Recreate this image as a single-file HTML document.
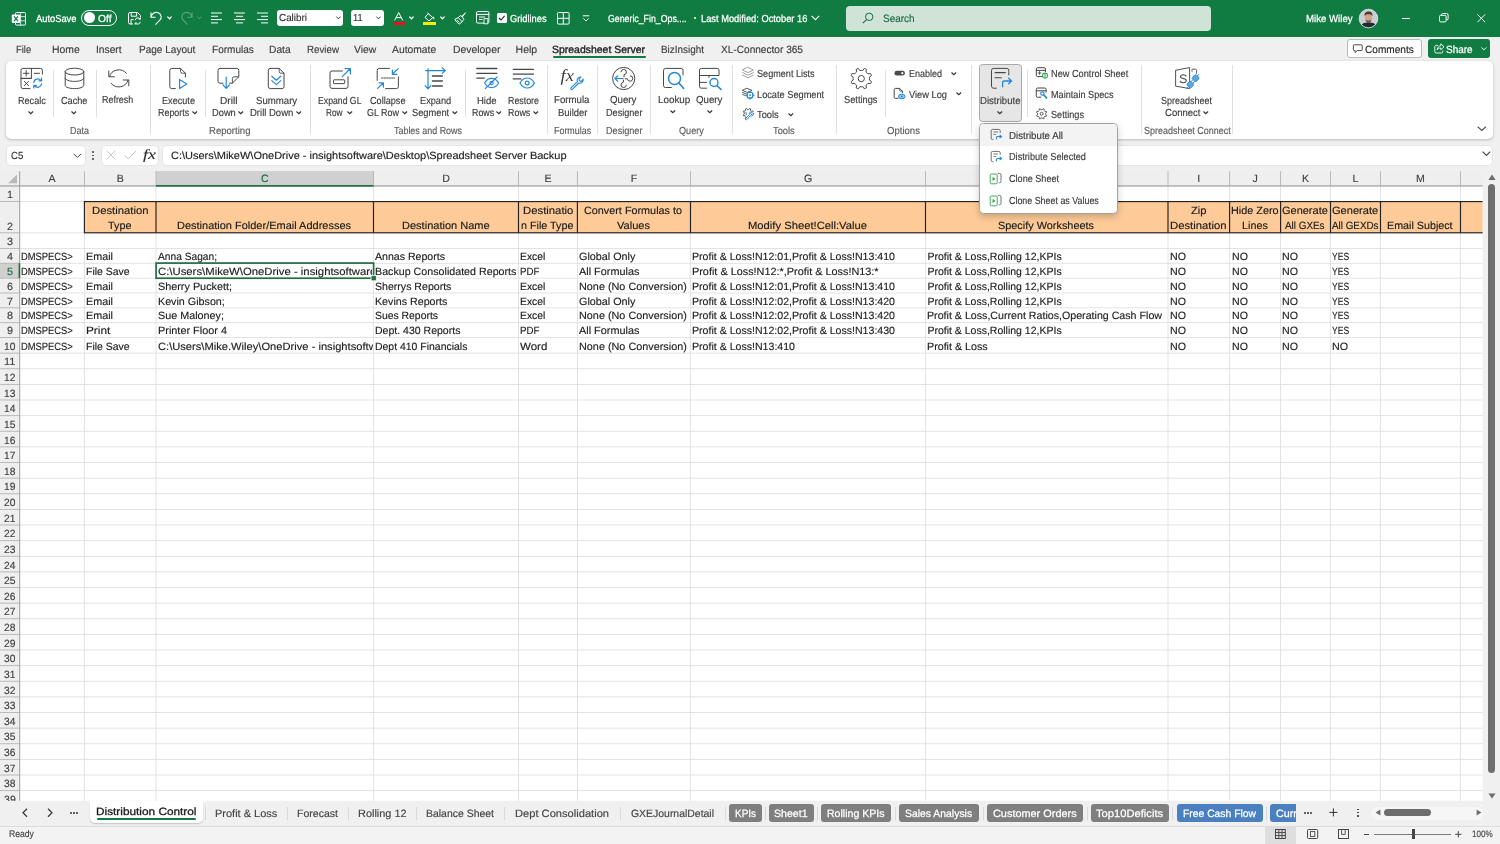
<!DOCTYPE html>
<html><head><meta charset="utf-8"><title>Excel</title>
<style>
html,body{margin:0;padding:0;}
body{width:1500px;height:844px;overflow:hidden;position:relative;background:#f0f0f0;font-family:"Liberation Sans",sans-serif;text-rendering:geometricPrecision;}
.b{position:absolute;box-sizing:border-box;display:block;}
.t{position:absolute;white-space:pre;line-height:1;transform-origin:0 0;display:block;}
svg{overflow:visible;}
</style></head><body><div id="root" style="position:absolute;left:0;top:0;width:1500px;height:844px;will-change:transform;">
<!-- p_title -->
<div class="b" style="left:0px;top:0px;width:1500px;height:36.6px;background:#107c41;"></div><svg class="b" style="left:11px;top:11px;" width="16" height="16" viewBox="0 0 16 16">
<rect x="4.5" y="1.5" width="10" height="12.6" rx="1" fill="none" stroke="#fff" stroke-width="1"/>
<path d="M4.5 5.6H14.5M4.5 9.8H14.5M9.6 1.5V14" stroke="#fff" stroke-width="0.9" fill="none" opacity=".85"/>
<rect x="0.8" y="3.6" width="8.4" height="8.4" rx="1" fill="#fff"/>
<path d="M3 5.4L7 10.2M7 5.4L3 10.2" stroke="#107c41" stroke-width="1.3"/></svg><span class="t" style="font-size:10.2px;color:#ffffff;top:15.00px;left:36.44px;transform:scaleX(0.9158);-webkit-text-stroke:.25px #ffffff;">AutoSave</span><div class="b" style="left:81px;top:9.6px;width:36.2px;height:16.6px;border:1px solid #fff;border-radius:9px;"></div><div class="b" style="left:84.2px;top:12.4px;width:11px;height:11px;background:#fff;border-radius:50%;"></div><span class="t" style="font-size:10.2px;color:#ffffff;top:15.00px;left:98.44px;transform:scaleX(1.0121);-webkit-text-stroke:.25px #ffffff;">Off</span><svg class="b" style="left:126.5px;top:11px;" width="15" height="15" viewBox="0 0 15 15"><path d="M1.5 3A1.5 1.5 0 0 1 3 1.5H10.5L13.5 4.5V6.5M1.5 3V11.5A1.5 1.5 0 0 0 3 13H6" fill="none" stroke="#fff" stroke-width="1"/>
<path d="M4.2 1.8V5.2H9.6V1.8M4 13V8.6H6.6" fill="none" stroke="#fff" stroke-width="1"/>
<path d="M8.2 9.2a2.8 2.8 0 0 1 5-1.2M13.4 6.6V8.2H11.8M13.4 10.8a2.8 2.8 0 0 1-5 1.2M8.2 13.6V12H9.8" fill="none" stroke="#fff" stroke-width="1"/></svg><svg class="b" style="left:149px;top:10px;" width="14" height="16" viewBox="0 0 14 16"><path d="M2 2.6V7.2H6.6" fill="none" stroke="#fff" stroke-width="1.1"/><path d="M2.2 7A5 4.6 0 1 1 10.6 10.4L6.4 14.6" fill="none" stroke="#fff" stroke-width="1.1"/></svg><svg class="b" style="left:166.6px;top:16px;" width="5" height="4" viewBox="0 0 5 4"><path d="M0.4 0.6L2.5 2.8L4.6 0.6" fill="none" stroke="#fff" stroke-width="1.25"/></svg><svg class="b" style="left:180px;top:10px;" width="14" height="16" viewBox="0 0 14 16"><path d="M12 2.6V7.2H7.4" fill="none" stroke="#5fa57f" stroke-width="1.1"/><path d="M11.8 7A5 4.6 0 1 0 3.4 10.4L7.6 14.6" fill="none" stroke="#5fa57f" stroke-width="1.1"/></svg><svg class="b" style="left:196.6px;top:16px;" width="5" height="4" viewBox="0 0 5 4"><path d="M0.4 0.6L2.5 2.8L4.6 0.6" fill="none" stroke="#5fa57f" stroke-width="1"/></svg><svg class="b" style="left:211px;top:12px;" width="12" height="12" viewBox="0 0 12 12"><path d="M0 1H11M0 4.3H7M0 7.6H11M0 10.9H7" stroke="#fff" stroke-width="1" fill="none"/></svg><svg class="b" style="left:233.5px;top:12px;" width="12" height="12" viewBox="0 0 12 12"><path d="M0 1H11M2 4.3H9M0 7.6H11M2 10.9H9" stroke="#fff" stroke-width="1" fill="none"/></svg><svg class="b" style="left:257px;top:12px;" width="12" height="12" viewBox="0 0 12 12"><path d="M0 1H11M4 4.3H11M0 7.6H11M4 10.9H11" stroke="#fff" stroke-width="1" fill="none"/></svg><div class="b" style="left:277px;top:9.6px;width:66.4px;height:16.6px;background:#fff;border-radius:3px;"></div><span class="t" style="font-size:10.2px;color:#333;top:14.00px;left:279.04px;transform:scaleX(0.9686);-webkit-text-stroke:.15px #333;">Calibri</span><svg class="b" style="left:335.6px;top:16px;" width="5" height="4" viewBox="0 0 5 4"><path d="M0.4 0.6L2.5 2.8L4.6 0.6" fill="none" stroke="#333" stroke-width="1"/></svg><div class="b" style="left:350.8px;top:9.6px;width:33.2px;height:16.6px;background:#fff;border-radius:3px;"></div><span class="t" style="font-size:10.2px;color:#333;top:14.00px;left:353.04px;transform:scaleX(0.9046);-webkit-text-stroke:.15px #333;">11</span><svg class="b" style="left:376px;top:16px;" width="5" height="4" viewBox="0 0 5 4"><path d="M0.4 0.6L2.5 2.8L4.6 0.6" fill="none" stroke="#333" stroke-width="1"/></svg><svg class="b" style="left:394px;top:12px;" width="10" height="9" viewBox="0 0 10 9"><path d="M.6 8.4L4.7 .6L8.8 8.4M2.2 5.6H7.2" fill="none" stroke="#fff" stroke-width="1"/></svg><div class="b" style="left:392.6px;top:21.7px;width:12.5px;height:3px;background:#e81123;"></div><svg class="b" style="left:409.4px;top:16px;" width="5" height="4" viewBox="0 0 5 4"><path d="M0.4 0.6L2.5 2.8L4.6 0.6" fill="none" stroke="#fff" stroke-width="1.25"/></svg><svg class="b" style="left:424px;top:11.6px;" width="12" height="10" viewBox="0 0 12 10"><path d="M4.2 1.6L8.8 5.6L5 9L1 5.4Z M3.4 .6L5.6 2.8" fill="none" stroke="#fff" stroke-width="1" stroke-linejoin="round"/><path d="M9.2 4.2C10.6 5.6 10.8 6.8 10 7.4C9 6.8 9 5.6 9.2 4.2Z" fill="#fff"/></svg><div class="b" style="left:423.1px;top:21.7px;width:12.5px;height:3px;background:#ffeb00;"></div><svg class="b" style="left:440px;top:16px;" width="5" height="4" viewBox="0 0 5 4"><path d="M0.4 0.6L2.5 2.8L4.6 0.6" fill="none" stroke="#fff" stroke-width="1.25"/></svg><svg class="b" style="left:454px;top:11.6px;" width="13" height="13" viewBox="0 0 13 13"><path d="M11.4 .8L8 4.6M8 4.6L6.4 3.6L4.2 5.6L8 9.6L9.8 7.6L9 6Z M4.2 5.6L.8 7.4C2.2 9.8 3.6 11 5.6 12.2L8 9.6M3 8.2L5 10.2" fill="none" stroke="#fff" stroke-width="1" stroke-linejoin="round" stroke-linecap="round"/><path d="M11.8 .6L8.6 5.2L7.6 4.2Z" fill="#fff"/></svg><svg class="b" style="left:476px;top:11px;" width="14" height="14" viewBox="0 0 14 14"><rect x=".5" y=".5" width="12.4" height="11.6" rx="1.2" fill="none" stroke="#fff"/><path d="M.5 3.4H12.9M3 6H9M3 8.4H6.5" stroke="#fff" fill="none"/><path d="M8 7.6H11.8V12.8H8Z" fill="#107c41" stroke="#fff" stroke-width=".9"/></svg><div class="b" style="left:497.2px;top:13.2px;width:9.6px;height:9.6px;background:#fff;border-radius:1.5px;"></div><svg class="b" style="left:497.2px;top:13.2px;" width="9.6" height="9.6" viewBox="0 0 9.6 9.6"><path d="M2 5L4 7L7.6 2.8" fill="none" stroke="#222" stroke-width="1.1"/></svg><span class="t" style="font-size:10.2px;color:#ffffff;top:15.00px;left:510.44px;transform:scaleX(0.9096);-webkit-text-stroke:.25px #ffffff;">Gridlines</span><svg class="b" style="left:557px;top:12px;" width="13" height="13" viewBox="0 0 13 13"><rect x=".5" y=".5" width="11.6" height="11.6" rx="1" fill="none" stroke="#fff"/><path d="M6.3 .5V12.1M.5 6.3H12.1" stroke="#fff" fill="none"/></svg><svg class="b" style="left:582.2px;top:15.4px;" width="8" height="8" viewBox="0 0 8 8"><path d="M.8 .8H7.2" stroke="#fff" fill="none"/><path d="M1.4 3.4L4 6L6.6 3.4" stroke="#fff" fill="none"/></svg><span class="t" style="font-size:10.2px;color:#ffffff;top:15.00px;left:608.44px;transform:scaleX(0.8618);-webkit-text-stroke:.25px #ffffff;">Generic_Fin_Ops....</span><div class="b" style="left:694px;top:16.9px;width:2.4px;height:2.4px;background:#fff;border-radius:50%;"></div><span class="t" style="font-size:10.2px;color:#ffffff;top:15.00px;left:701.24px;transform:scaleX(0.9118);-webkit-text-stroke:.25px #ffffff;">Last Modified: October 16</span><svg class="b" style="left:810.6px;top:15.4px;" width="9" height="6" viewBox="0 0 9 6"><path d="M.6 .8L4.4 4.6L8.2 .8" fill="none" stroke="#fff" stroke-width="1.1"/></svg><div class="b" style="left:845.6px;top:5.9px;width:365.6px;height:24.8px;background:#cfe3d7;border-radius:4px;"></div><svg class="b" style="left:861.5px;top:12px;" width="12" height="12" viewBox="0 0 12 12"><circle cx="7.2" cy="4.8" r="3.7" fill="none" stroke="#1f6b42" stroke-width="1"/><path d="M4.6 7.6L.8 11.2" stroke="#1f6b42" stroke-width="1.1"/></svg><span class="t" style="font-size:10.6px;color:#1f6b42;top:14.00px;left:883.42px;transform:scaleX(0.9413);-webkit-text-stroke:.15px #1f6b42;">Search</span><span class="t" style="font-size:10.2px;color:#ffffff;top:15.00px;left:1306.04px;transform:scaleX(0.9456);-webkit-text-stroke:.25px #ffffff;">Mike Wiley</span><svg class="b" style="left:1358.6px;top:8.6px;" width="19" height="19" viewBox="0 0 19 19"><defs><clipPath id="av"><circle cx="9.5" cy="9.5" r="9.3"/></clipPath></defs>
<circle cx="9.5" cy="9.5" r="9.3" fill="#c9cdd6"/>
<g clip-path="url(#av)"><path d="M1 19C2 14.4 5 13.4 9.5 13.4S17 14.4 18 19Z" fill="#23262e"/>
<ellipse cx="9.5" cy="8.4" rx="3.7" ry="4.6" fill="#d3a486"/>
<path d="M5.6 7C5.4 3.6 7.4 2.6 9.6 2.6S13.8 3.8 13.4 7C12.6 5.6 11 5.2 9.5 5.2S6.4 5.6 5.6 7Z" fill="#4a3a30"/>
<path d="M6.4 10.4C7 13.4 8.4 13.8 9.5 13.8S12 13.4 12.6 10.4C11.6 11.4 10.6 11.6 9.5 11.6S7.4 11.4 6.4 10.4Z" fill="#6b5547"/></g>
<circle cx="9.5" cy="9.5" r="9.3" fill="none" stroke="#e8ebf0" stroke-width=".8"/></svg><div class="b" style="left:1402px;top:17.8px;width:8.2px;height:1px;background:#fff;"></div><svg class="b" style="left:1438.6px;top:13.4px;" width="10" height="10" viewBox="0 0 10 10"><rect x=".5" y="2.3" width="6.6" height="6.6" rx="1.2" fill="none" stroke="#fff"/><path d="M2.6 2.2V1.6A1.1 1.1 0 0 1 3.7 .5H7.6A1.5 1.5 0 0 1 9.1 2V5.8A1.1 1.1 0 0 1 8 6.9H7.3" fill="none" stroke="#fff"/></svg><svg class="b" style="left:1476.8px;top:13.8px;" width="9" height="9" viewBox="0 0 9 9"><path d="M.4 .4L8.2 8.2M8.2 .4L.4 8.2" stroke="#fff" stroke-width="1" fill="none"/></svg>
<!-- p_tabs -->
<span class="t" style="font-size:10.5px;color:#3d3d3d;top:45.00px;left:16.42px;transform:scaleX(0.8981);-webkit-text-stroke:.15px #3d3d3d;">File</span><span class="t" style="font-size:10.5px;color:#3d3d3d;top:45.00px;left:52.22px;transform:scaleX(0.9922);-webkit-text-stroke:.15px #3d3d3d;">Home</span><span class="t" style="font-size:10.5px;color:#3d3d3d;top:45.00px;left:96.02px;transform:scaleX(0.9746);-webkit-text-stroke:.15px #3d3d3d;">Insert</span><span class="t" style="font-size:10.5px;color:#3d3d3d;top:45.00px;left:139.02px;transform:scaleX(0.9564);-webkit-text-stroke:.15px #3d3d3d;">Page Layout</span><span class="t" style="font-size:10.5px;color:#3d3d3d;top:45.00px;left:211.82px;transform:scaleX(0.9550);-webkit-text-stroke:.15px #3d3d3d;">Formulas</span><span class="t" style="font-size:10.5px;color:#3d3d3d;top:45.00px;left:269.42px;transform:scaleX(0.9734);-webkit-text-stroke:.15px #3d3d3d;">Data</span><span class="t" style="font-size:10.5px;color:#3d3d3d;top:45.00px;left:307.02px;transform:scaleX(0.9291);-webkit-text-stroke:.15px #3d3d3d;">Review</span><span class="t" style="font-size:10.5px;color:#3d3d3d;top:45.00px;left:353.82px;transform:scaleX(0.9831);-webkit-text-stroke:.15px #3d3d3d;">View</span><span class="t" style="font-size:10.5px;color:#3d3d3d;top:45.00px;left:392.22px;transform:scaleX(0.9832);-webkit-text-stroke:.15px #3d3d3d;">Automate</span><span class="t" style="font-size:10.5px;color:#3d3d3d;top:45.00px;left:453.02px;transform:scaleX(0.9900);-webkit-text-stroke:.15px #3d3d3d;">Developer</span><span class="t" style="font-size:10.5px;color:#3d3d3d;top:45.00px;left:515.62px;-webkit-text-stroke:.15px #3d3d3d;">Help</span><span class="t" style="font-size:10.5px;color:#3d3d3d;top:45.00px;left:661.02px;transform:scaleX(0.9444);-webkit-text-stroke:.15px #3d3d3d;">BizInsight</span><span class="t" style="font-size:10.5px;color:#3d3d3d;top:45.00px;left:720.82px;transform:scaleX(0.9620);-webkit-text-stroke:.15px #3d3d3d;">XL-Connector 365</span><span class="t" style="font-size:10.5px;color:#1f1f1f;top:45.00px;left:552.42px;transform:scaleX(0.9958);-webkit-text-stroke:.35px #1f1f1f;">Spreadsheet Server</span><div class="b" style="left:553px;top:55.9px;width:92.6px;height:1.7px;background:#107c41;border-radius:1px;"></div><div class="b" style="left:1346.5px;top:39.4px;width:75px;height:18.8px;background:#fff;border:1px solid #b9b9b9;border-radius:3px;"></div><svg class="b" style="left:1352.6px;top:44px;" width="10" height="10" viewBox="0 0 10 10"><path d="M1.2 .8H8.4A.8 .8 0 0 1 9.2 1.6V5.8A.8 .8 0 0 1 8.4 6.6H4.2L2.2 8.6V6.6H1.2A.8 .8 0 0 1 .4 5.8V1.6A.8 .8 0 0 1 1.2 .8Z" fill="none" stroke="#333" stroke-width=".9"/></svg><span class="t" style="font-size:10.5px;color:#262626;top:45.00px;left:1364.92px;transform:scaleX(0.9612);-webkit-text-stroke:.15px #262626;">Comments</span><div class="b" style="left:1427.8px;top:39.4px;width:62.6px;height:18.8px;background:#107c41;border-radius:3px;"></div><svg class="b" style="left:1433.6px;top:43.4px;" width="11" height="11" viewBox="0 0 11 11"><path d="M4 2.4H2.2A1.4 1.4 0 0 0 .8 3.8V8.6A1.4 1.4 0 0 0 2.2 10H7.4A1.4 1.4 0 0 0 8.8 8.6V7.6" fill="none" stroke="#fff" stroke-width=".9"/><path d="M6.8 .8L10 3.8L6.8 6.8V5C5 5 3.9 5.6 3.2 7C3.4 4.4 4.6 2.9 6.8 2.7Z" fill="none" stroke="#fff" stroke-width=".9" stroke-linejoin="round"/></svg><span class="t" style="font-size:10.5px;color:#fff;top:45.00px;left:1445.92px;transform:scaleX(0.9489);-webkit-text-stroke:.25px #fff;">Share</span><svg class="b" style="left:1481px;top:47.4px;" width="6" height="4" viewBox="0 0 6 4"><path d="M.4 .5L2.8 2.9L5.2 .5" fill="none" stroke="#fff" stroke-width="1"/></svg>
<!-- p_ribbon -->
<div class="b" style="left:6px;top:61px;width:1487.4px;height:77.8px;background:#fff;border-radius:5px;box-shadow:0 1px 3px rgba(0,0,0,.22),0 0 1px rgba(0,0,0,.12);"></div><div class="b" style="left:149.5px;top:64.5px;width:1px;height:69.5px;background:#e1e1e1;"></div><div class="b" style="left:309.8px;top:64.5px;width:1px;height:69.5px;background:#e1e1e1;"></div><div class="b" style="left:546.5px;top:64.5px;width:1px;height:69.5px;background:#e1e1e1;"></div><div class="b" style="left:597px;top:64.5px;width:1px;height:69.5px;background:#e1e1e1;"></div><div class="b" style="left:649.5px;top:64.5px;width:1px;height:69.5px;background:#e1e1e1;"></div><div class="b" style="left:731.5px;top:64.5px;width:1px;height:69.5px;background:#e1e1e1;"></div><div class="b" style="left:835.7px;top:64.5px;width:1px;height:69.5px;background:#e1e1e1;"></div><div class="b" style="left:971.2px;top:64.5px;width:1px;height:69.5px;background:#e1e1e1;"></div><div class="b" style="left:1141.2px;top:64.5px;width:1px;height:69.5px;background:#e1e1e1;"></div><div class="b" style="left:1232px;top:64.5px;width:1px;height:69.5px;background:#e1e1e1;"></div><div class="b" style="left:52.5px;top:69.5px;width:1px;height:47.5px;background:#e1e1e1;"></div><div class="b" style="left:95.7px;top:69.5px;width:1px;height:47.5px;background:#e1e1e1;"></div><div class="b" style="left:205px;top:69.5px;width:1px;height:47.5px;background:#e1e1e1;"></div><div class="b" style="left:465px;top:69.5px;width:1px;height:47.5px;background:#e1e1e1;"></div><div class="b" style="left:884.5px;top:69.5px;width:1px;height:47.5px;background:#e1e1e1;"></div><div class="b" style="left:1026.5px;top:69.5px;width:1px;height:47.5px;background:#e1e1e1;"></div><span class="t" style="font-size:10.2px;color:#3a3a3a;top:97.00px;left:17.64px;transform:scaleX(0.8917);-webkit-text-stroke:.15px #3a3a3a;">Recalc</span><svg class="b" style="left:28.2px;top:110.9px;" width="5.6" height="3.4" viewBox="0 0 5.6 3.4"><path d="M.5 .5L2.8 2.685L5.1 .5" fill="none" stroke="#333" stroke-width="1.2"/></svg><span class="t" style="font-size:10.2px;color:#3a3a3a;top:97.00px;left:61.14px;transform:scaleX(0.8987);-webkit-text-stroke:.15px #3a3a3a;">Cache</span><svg class="b" style="left:71.2px;top:110.9px;" width="5.6" height="3.4" viewBox="0 0 5.6 3.4"><path d="M.5 .5L2.8 2.685L5.1 .5" fill="none" stroke="#333" stroke-width="1.2"/></svg><span class="t" style="font-size:10.2px;color:#3a3a3a;top:96.00px;left:102.14px;transform:scaleX(0.8766);-webkit-text-stroke:.15px #3a3a3a;">Refresh</span><span class="t" style="font-size:10.2px;color:#5a5a5a;top:127.00px;left:69.64px;transform:scaleX(0.8810);-webkit-text-stroke:.15px #5a5a5a;">Data</span><span class="t" style="font-size:10.2px;color:#3a3a3a;top:97.00px;left:161.64px;transform:scaleX(0.8956);-webkit-text-stroke:.15px #3a3a3a;">Execute</span><span class="t" style="font-size:10.2px;color:#3a3a3a;top:109.00px;left:157.94px;transform:scaleX(0.8738);-webkit-text-stroke:.15px #3a3a3a;">Reports</span><svg class="b" style="left:192px;top:111.2px;" width="5.6" height="3.4" viewBox="0 0 5.6 3.4"><path d="M.5 .5L2.8 2.685L5.1 .5" fill="none" stroke="#333" stroke-width="1.2"/></svg><span class="t" style="font-size:10.2px;color:#3a3a3a;top:97.00px;left:219.94px;transform:scaleX(0.9956);-webkit-text-stroke:.15px #3a3a3a;">Drill</span><span class="t" style="font-size:10.2px;color:#3a3a3a;top:109.00px;left:211.64px;transform:scaleX(0.9125);-webkit-text-stroke:.15px #3a3a3a;">Down</span><svg class="b" style="left:238.2px;top:111.2px;" width="5.6" height="3.4" viewBox="0 0 5.6 3.4"><path d="M.5 .5L2.8 2.685L5.1 .5" fill="none" stroke="#333" stroke-width="1.2"/></svg><span class="t" style="font-size:10.2px;color:#3a3a3a;top:97.00px;left:255.94px;transform:scaleX(0.9444);-webkit-text-stroke:.15px #3a3a3a;">Summary</span><span class="t" style="font-size:10.2px;color:#3a3a3a;top:109.00px;left:250.14px;transform:scaleX(0.9321);-webkit-text-stroke:.15px #3a3a3a;">Drill Down</span><svg class="b" style="left:296px;top:111.2px;" width="5.6" height="3.4" viewBox="0 0 5.6 3.4"><path d="M.5 .5L2.8 2.685L5.1 .5" fill="none" stroke="#333" stroke-width="1.2"/></svg><span class="t" style="font-size:10.2px;color:#5a5a5a;top:127.00px;left:209.14px;transform:scaleX(0.9385);-webkit-text-stroke:.15px #5a5a5a;">Reporting</span><span class="t" style="font-size:10.2px;color:#3a3a3a;top:97.00px;left:318.14px;transform:scaleX(0.8526);-webkit-text-stroke:.15px #3a3a3a;">Expand GL</span><span class="t" style="font-size:10.2px;color:#3a3a3a;top:109.00px;left:326.44px;transform:scaleX(0.8077);-webkit-text-stroke:.15px #3a3a3a;">Row</span><svg class="b" style="left:347.2px;top:111.2px;" width="5.6" height="3.4" viewBox="0 0 5.6 3.4"><path d="M.5 .5L2.8 2.685L5.1 .5" fill="none" stroke="#333" stroke-width="1.2"/></svg><span class="t" style="font-size:10.2px;color:#3a3a3a;top:97.00px;left:369.94px;transform:scaleX(0.8944);-webkit-text-stroke:.15px #3a3a3a;">Collapse</span><span class="t" style="font-size:10.2px;color:#3a3a3a;top:109.00px;left:366.94px;transform:scaleX(0.8777);-webkit-text-stroke:.15px #3a3a3a;">GL Row</span><svg class="b" style="left:401.6px;top:111.2px;" width="5.6" height="3.4" viewBox="0 0 5.6 3.4"><path d="M.5 .5L2.8 2.685L5.1 .5" fill="none" stroke="#333" stroke-width="1.2"/></svg><span class="t" style="font-size:10.2px;color:#3a3a3a;top:97.00px;left:420.44px;transform:scaleX(0.9018);-webkit-text-stroke:.15px #3a3a3a;">Expand</span><span class="t" style="font-size:10.2px;color:#3a3a3a;top:109.00px;left:412.44px;transform:scaleX(0.9114);-webkit-text-stroke:.15px #3a3a3a;">Segment</span><svg class="b" style="left:452px;top:111.2px;" width="5.6" height="3.4" viewBox="0 0 5.6 3.4"><path d="M.5 .5L2.8 2.685L5.1 .5" fill="none" stroke="#333" stroke-width="1.2"/></svg><span class="t" style="font-size:10.2px;color:#3a3a3a;top:97.00px;left:477.14px;transform:scaleX(0.9292);-webkit-text-stroke:.15px #3a3a3a;">Hide</span><span class="t" style="font-size:10.2px;color:#3a3a3a;top:109.00px;left:471.94px;transform:scaleX(0.8699);-webkit-text-stroke:.15px #3a3a3a;">Rows</span><svg class="b" style="left:496.2px;top:111.2px;" width="5.6" height="3.4" viewBox="0 0 5.6 3.4"><path d="M.5 .5L2.8 2.685L5.1 .5" fill="none" stroke="#333" stroke-width="1.2"/></svg><span class="t" style="font-size:10.2px;color:#3a3a3a;top:97.00px;left:508.14px;transform:scaleX(0.8682);-webkit-text-stroke:.15px #3a3a3a;">Restore</span><span class="t" style="font-size:10.2px;color:#3a3a3a;top:109.00px;left:508.14px;transform:scaleX(0.8738);-webkit-text-stroke:.15px #3a3a3a;">Rows</span><svg class="b" style="left:532.5px;top:111.2px;" width="5.6" height="3.4" viewBox="0 0 5.6 3.4"><path d="M.5 .5L2.8 2.685L5.1 .5" fill="none" stroke="#333" stroke-width="1.2"/></svg><span class="t" style="font-size:10.2px;color:#5a5a5a;top:127.00px;left:394.44px;transform:scaleX(0.8760);-webkit-text-stroke:.15px #5a5a5a;">Tables and Rows</span><span class="t" style="font-size:10.2px;color:#3a3a3a;top:96.00px;left:554.44px;transform:scaleX(0.9490);-webkit-text-stroke:.15px #3a3a3a;">Formula</span><span class="t" style="font-size:10.2px;color:#3a3a3a;top:109.00px;left:557.64px;transform:scaleX(0.9291);-webkit-text-stroke:.15px #3a3a3a;">Builder</span><span class="t" style="font-size:10.2px;color:#5a5a5a;top:127.00px;left:553.94px;transform:scaleX(0.8752);-webkit-text-stroke:.15px #5a5a5a;">Formulas</span><span class="t" style="font-size:10.2px;color:#3a3a3a;top:96.00px;left:610.14px;transform:scaleX(0.9538);-webkit-text-stroke:.15px #3a3a3a;">Query</span><span class="t" style="font-size:10.2px;color:#3a3a3a;top:109.00px;left:605.64px;transform:scaleX(0.8943);-webkit-text-stroke:.15px #3a3a3a;">Designer</span><span class="t" style="font-size:10.2px;color:#5a5a5a;top:127.00px;left:605.64px;transform:scaleX(0.8943);-webkit-text-stroke:.15px #5a5a5a;">Designer</span><span class="t" style="font-size:10.2px;color:#3a3a3a;top:96.00px;left:657.64px;transform:scaleX(0.9651);-webkit-text-stroke:.15px #3a3a3a;">Lookup</span><svg class="b" style="left:670.4px;top:110.4px;" width="5.6" height="3.4" viewBox="0 0 5.6 3.4"><path d="M.5 .5L2.8 2.685L5.1 .5" fill="none" stroke="#333" stroke-width="1.2"/></svg><span class="t" style="font-size:10.2px;color:#3a3a3a;top:96.00px;left:696.44px;transform:scaleX(0.9538);-webkit-text-stroke:.15px #3a3a3a;">Query</span><svg class="b" style="left:706.6px;top:110.4px;" width="5.6" height="3.4" viewBox="0 0 5.6 3.4"><path d="M.5 .5L2.8 2.685L5.1 .5" fill="none" stroke="#333" stroke-width="1.2"/></svg><span class="t" style="font-size:10.2px;color:#5a5a5a;top:127.00px;left:678.64px;transform:scaleX(0.8926);-webkit-text-stroke:.15px #5a5a5a;">Query</span><span class="t" style="font-size:10.2px;color:#3a3a3a;top:70.00px;left:756.94px;transform:scaleX(0.8932);-webkit-text-stroke:.15px #3a3a3a;">Segment Lists</span><span class="t" style="font-size:10.2px;color:#3a3a3a;top:91.00px;left:756.94px;transform:scaleX(0.9052);-webkit-text-stroke:.15px #3a3a3a;">Locate Segment</span><span class="t" style="font-size:10.2px;color:#3a3a3a;top:111.00px;left:756.94px;transform:scaleX(0.9112);-webkit-text-stroke:.15px #3a3a3a;">Tools</span><svg class="b" style="left:787.7px;top:112.6px;" width="5.6" height="3.4" viewBox="0 0 5.6 3.4"><path d="M.5 .5L2.8 2.685L5.1 .5" fill="none" stroke="#333" stroke-width="1.2"/></svg><span class="t" style="font-size:10.2px;color:#5a5a5a;top:127.00px;left:773.14px;transform:scaleX(0.9154);-webkit-text-stroke:.15px #5a5a5a;">Tools</span><span class="t" style="font-size:10.2px;color:#3a3a3a;top:96.00px;left:844.44px;transform:scaleX(0.9092);-webkit-text-stroke:.15px #3a3a3a;">Settings</span><span class="t" style="font-size:10.2px;color:#3a3a3a;top:70.00px;left:908.64px;transform:scaleX(0.8817);-webkit-text-stroke:.15px #3a3a3a;">Enabled</span><svg class="b" style="left:951.2px;top:72px;" width="5.6" height="3.4" viewBox="0 0 5.6 3.4"><path d="M.5 .5L2.8 2.685L5.1 .5" fill="none" stroke="#333" stroke-width="1.2"/></svg><span class="t" style="font-size:10.2px;color:#3a3a3a;top:91.00px;left:908.64px;transform:scaleX(0.9098);-webkit-text-stroke:.15px #3a3a3a;">View Log</span><svg class="b" style="left:955.8px;top:92.4px;" width="5.6" height="3.4" viewBox="0 0 5.6 3.4"><path d="M.5 .5L2.8 2.685L5.1 .5" fill="none" stroke="#333" stroke-width="1.2"/></svg><span class="t" style="font-size:10.2px;color:#5a5a5a;top:127.00px;left:887.44px;transform:scaleX(0.9390);-webkit-text-stroke:.15px #5a5a5a;">Options</span><div class="b" style="left:978.7px;top:63.7px;width:43px;height:58.4px;background:#e6e6e6;border:1px solid #a9a9a9;border-radius:3.5px;"></div><span class="t" style="font-size:10.2px;color:#3a3a3a;top:97.00px;left:979.94px;transform:scaleX(0.9405);-webkit-text-stroke:.15px #3a3a3a;">Distribute</span><svg class="b" style="left:997.2px;top:111px;" width="5.6" height="3.4" viewBox="0 0 5.6 3.4"><path d="M.5 .5L2.8 2.685L5.1 .5" fill="none" stroke="#333" stroke-width="1.2"/></svg><span class="t" style="font-size:10.2px;color:#3a3a3a;top:70.00px;left:1051.14px;transform:scaleX(0.9036);-webkit-text-stroke:.15px #3a3a3a;">New Control Sheet</span><span class="t" style="font-size:10.2px;color:#3a3a3a;top:91.00px;left:1051.14px;transform:scaleX(0.8968);-webkit-text-stroke:.15px #3a3a3a;">Maintain Specs</span><span class="t" style="font-size:10.2px;color:#3a3a3a;top:111.00px;left:1051.14px;transform:scaleX(0.8956);-webkit-text-stroke:.15px #3a3a3a;">Settings</span><span class="t" style="font-size:10.2px;color:#3a3a3a;top:97.00px;left:1161.44px;transform:scaleX(0.8821);-webkit-text-stroke:.15px #3a3a3a;">Spreadsheet</span><span class="t" style="font-size:10.2px;color:#3a3a3a;top:109.00px;left:1164.94px;transform:scaleX(0.9345);-webkit-text-stroke:.15px #3a3a3a;">Connect</span><svg class="b" style="left:1202.8px;top:111.2px;" width="5.6" height="3.4" viewBox="0 0 5.6 3.4"><path d="M.5 .5L2.8 2.685L5.1 .5" fill="none" stroke="#333" stroke-width="1.2"/></svg><span class="t" style="font-size:10.2px;color:#5a5a5a;top:127.00px;left:1143.64px;transform:scaleX(0.8803);-webkit-text-stroke:.15px #5a5a5a;">Spreadsheet Connect</span><svg class="b" style="left:1477.4px;top:126px;" width="9.6" height="5" viewBox="0 0 9.6 5"><path d="M.6 .6L4.8 4.4L9 .6" fill="none" stroke="#444" stroke-width="1.1"/></svg><svg class="b" style="left:0px;top:0px;pointer-events:none;" width="1500" height="844" viewBox="0 0 1500 844"><path d="M30 88.6H23A2 2 0 0 1 21 86.6V70.4A2 2 0 0 1 23 68.4H40.4A2 2 0 0 1 42.4 70.4V74" fill="none" stroke="#474747" stroke-width="1" stroke-linecap="round" stroke-linejoin="round" /><path d="M31.4 68.4V78.4H21M31.4 78.4M21 78.4" fill="none" stroke="#474747" stroke-width="1" stroke-linecap="round" stroke-linejoin="round" /><path d="M31.4 78.4H21" fill="none" stroke="#474747" stroke-width="1" stroke-linecap="round" stroke-linejoin="round" /><path d="M26.2 70.6V76M23.5 73.3H28.9" fill="none" stroke="#474747" stroke-width="1" stroke-linecap="round" stroke-linejoin="round" /><path d="M34.4 73.3H39.6" fill="none" stroke="#474747" stroke-width="1" stroke-linecap="round" stroke-linejoin="round" /><path d="M24.4 81.4L28.4 85.6M28.4 81.4L24.4 85.6" fill="none" stroke="#474747" stroke-width="1" stroke-linecap="round" stroke-linejoin="round" /><path d="M33.8 82.4A4 4 0 0 1 41 80.6M41.6 78.2V80.8H39M41.6 83.8A4 4 0 0 1 34.4 85.6M33.8 88V85.4H36.4" fill="none" stroke="#2488d8" stroke-width="1.2" stroke-linecap="round" stroke-linejoin="round" /><ellipse cx="74.5" cy="71.6" rx="9.3" ry="3.4" fill="none" stroke="#474747"/><path d="M65.2 71.6V85.2C65.2 87.2 69.4 88.6 74.5 88.6S83.8 87.2 83.8 85.2V71.6" fill="none" stroke="#474747" stroke-width="1" stroke-linecap="round" stroke-linejoin="round" /><path d="M65.2 78C65.2 80 69.4 81.4 74.5 81.4S83.8 80 83.8 78" fill="none" stroke="#474747" stroke-width="1" stroke-linecap="round" stroke-linejoin="round" /><path d="M109.6 76.6A9.4 8.6 0 0 1 126.4 73.4M108.8 71V76.8H114.4" fill="none" stroke="#474747" stroke-width="1" stroke-linecap="round" stroke-linejoin="round" /><path d="M128 80A9.4 8.6 0 0 1 111.2 83.4M128.8 85.8V80H123.2" fill="none" stroke="#474747" stroke-width="1" stroke-linecap="round" stroke-linejoin="round" /><path d="M175.4 88.6H171.8A2 2 0 0 1 169.8 86.6V70.4A2 2 0 0 1 171.8 68.4H180.6L185.4 73.2V77" fill="none" stroke="#474747" stroke-width="1" stroke-linecap="round" stroke-linejoin="round" /><path d="M180.6 68.6V71.6A1.6 1.6 0 0 0 182.2 73.2H185.2" fill="none" stroke="#474747" stroke-width="0.9" stroke-linecap="round" stroke-linejoin="round" /><path d="M179.6 79.4L186.8 84L179.6 88.6Z" fill="none" stroke="#2488d8" stroke-width="1.2" stroke-linecap="round" stroke-linejoin="round" /><path d="M223 83.2H220A2 2 0 0 1 218 81.2V70.4A2 2 0 0 1 220 68.4H236.8A2 2 0 0 1 238.8 70.4V76.6L232.4 83.2H229.6" fill="none" stroke="#474747" stroke-width="1" stroke-linecap="round" stroke-linejoin="round" /><path d="M238.6 76.8H234A1.6 1.6 0 0 0 232.4 78.4V83" fill="none" stroke="#474747" stroke-width="0.9" stroke-linecap="round" stroke-linejoin="round" /><path d="M226.2 77V88M223 85L226.2 88.4L229.4 85" fill="none" stroke="#2488d8" stroke-width="1.2" stroke-linecap="round" stroke-linejoin="round" /><path d="M270.3 68.4H279.2L284 73.2V86.6A2 2 0 0 1 282 88.6H270.3A2 2 0 0 1 268.3 86.6V70.4A2 2 0 0 1 270.3 68.4Z" fill="none" stroke="#474747" stroke-width="1" stroke-linecap="round" stroke-linejoin="round" /><path d="M279.2 68.6V71.6A1.6 1.6 0 0 0 280.8 73.2H283.8" fill="none" stroke="#474747" stroke-width="0.9" stroke-linecap="round" stroke-linejoin="round" /><path d="M271.8 76.2L276.3 80.2L280.8 76.2M271.8 80.6L276.3 84.6L280.8 80.6" fill="none" stroke="#2488d8" stroke-width="1.2" stroke-linecap="round" stroke-linejoin="round" /><path d="M342.4 71H332A2 2 0 0 0 330 73V86.4A2 2 0 0 0 332 88.4H346A2 2 0 0 0 348 86.4V76.6" fill="none" stroke="#474747" stroke-width="1" stroke-linecap="round" stroke-linejoin="round" /><rect x="333.5" y="79.8" width="11.2" height="3.8" rx=".6" fill="none" stroke="#474747"/><path d="M342.2 76.6L350.2 68.8M345 68.6H350.4V74" fill="none" stroke="#2488d8" stroke-width="1.2" stroke-linecap="round" stroke-linejoin="round" /><path d="M389.4 68.4H379.2A2 2 0 0 0 377.2 70.4V80.4" fill="none" stroke="#474747" stroke-width="1" stroke-linecap="round" stroke-linejoin="round" /><path d="M385.6 88.6H396.4A2 2 0 0 0 398.4 86.6V77" fill="none" stroke="#474747" stroke-width="1" stroke-linecap="round" stroke-linejoin="round" /><path d="M381.6 78H394.6" fill="none" stroke="#474747" stroke-width="1" stroke-linecap="round" stroke-linejoin="round" stroke-dasharray="1.4 1.1" stroke-linecap="butt"/><path d="M398.2 68.6L392.6 74M392.4 70V74.4H396.8" fill="none" stroke="#2488d8" stroke-width="1.2" stroke-linecap="round" stroke-linejoin="round" /><path d="M377.6 88.4L383.2 83M379 82.8H383.4V87.2" fill="none" stroke="#2488d8" stroke-width="1.2" stroke-linecap="round" stroke-linejoin="round" /><path d="M428 68.6V88.4M425.2 85.6L428 88.8L430.8 85.6M425.6 70.6H445M442.2 67.8L445.4 70.6L442.2 73.4" fill="none" stroke="#2488d8" stroke-width="1.2" stroke-linecap="round" stroke-linejoin="round" /><path d="M432.4 76H442.4M432.4 81H442.4M432.4 86H442.4" fill="none" stroke="#474747" stroke-width="1.3" stroke-linecap="round" stroke-linejoin="round" stroke-linecap="butt"/><path d="M476.8 68.5H496.8M476.8 73.3H496.8M476.8 78.1H484.4" fill="none" stroke="#474747" stroke-width="1.3" stroke-linecap="round" stroke-linejoin="round" stroke-linecap="butt"/><path d="M484.6 83C486.4 79.8 488.8 78.4 491.6 78.4S496.8 79.8 498.6 83C496.8 86.2 494.4 87.6 491.6 87.6S486.4 86.2 484.6 83Z" fill="none" stroke="#2488d8" stroke-width="1.2" stroke-linecap="round" stroke-linejoin="round" /><circle cx="491.6" cy="83" r="1.6" fill="none" stroke="#2488d8" stroke-width="1.1"/><path d="M485.2 88.6L497 77" fill="none" stroke="#2488d8" stroke-width="1.2" stroke-linecap="round" stroke-linejoin="round" /><path d="M513.3 69.3H533.5M513.3 74.1H533.5M513.3 78.9H521" fill="none" stroke="#474747" stroke-width="1.3" stroke-linecap="round" stroke-linejoin="round" stroke-linecap="butt"/><path d="M520 83C521.8 79.6 524.4 78 527.2 78S532.6 79.6 534.4 83C532.6 86.4 530 88 527.2 88S521.8 86.4 520 83Z" fill="none" stroke="#2488d8" stroke-width="1.2" stroke-linecap="round" stroke-linejoin="round" /><circle cx="527.2" cy="83" r="1.9" fill="none" stroke="#2488d8" stroke-width="1.2"/><text x="560.6" y="80.6" font-family="Liberation Serif,serif" font-style="italic" font-size="17" fill="#3d3d3d" textLength="13.4" lengthAdjust="spacingAndGlyphs">fx</text><path d="M571 87.8L577.4 81.6A3.4 3.4 0 0 1 581 77L579 79.2L579.6 80.8L581.2 81.4L583.2 79.2A3.4 3.4 0 0 1 578.8 83L572.6 89.2A1 1 0 0 1 571 87.8Z" fill="none" stroke="#2488d8" stroke-width="1.1" stroke-linecap="round" stroke-linejoin="round" /><circle cx="623.7" cy="78.5" r="11.1" fill="none" stroke="#474747"/><path d="M621 71.8A2.7 2.7 0 1 1 624 74.8V77M630.4 75.8A2.7 2.7 0 1 1 627.4 78.8H625.2M626.4 85.2A2.7 2.7 0 1 1 623.4 82.2V80" fill="none" stroke="#474747" stroke-width="1" stroke-linecap="round" stroke-linejoin="round" /><path d="M615 78.5H623M617.8 75.8L615 78.5L617.8 81.2" fill="none" stroke="#2488d8" stroke-width="1.2" stroke-linecap="round" stroke-linejoin="round" /><path d="M671.4 87.5H665.5A2 2 0 0 1 663.5 85.5V70.4A2 2 0 0 1 665.5 68.4H681A2 2 0 0 1 683 70.4V75" fill="none" stroke="#474747" stroke-width="1" stroke-linecap="round" stroke-linejoin="round" /><circle cx="674.5" cy="78.5" r="6" fill="none" stroke="#2488d8" stroke-width="1.5"/><path d="M678.8 82.8L683.6 88.4" fill="none" stroke="#2488d8" stroke-width="1.6" stroke-linecap="round" stroke-linejoin="round" /><path d="M699.5 75.5V70.2A1.8 1.8 0 0 1 701.3 68.4H717.2A1.8 1.8 0 0 1 719 70.2V75.5H699.5V86.4A1.8 1.8 0 0 0 701.3 88.2H706.5M699.5 82.4H706.5M709 75.5V77.4" fill="none" stroke="#474747" stroke-width="1" stroke-linecap="round" stroke-linejoin="round" /><circle cx="714" cy="82.5" r="4" fill="none" stroke="#2488d8" stroke-width="1.4"/><path d="M717 85.6L721 89.4" fill="none" stroke="#2488d8" stroke-width="1.5" stroke-linecap="round" stroke-linejoin="round" /></svg><svg class="b" style="left:0px;top:0px;pointer-events:none;" width="1500" height="844" viewBox="0 0 1500 844"><path d="M748 67.4L753.4 70L748 72.6L742.6 70Z" fill="none" stroke="#8a8a8a" stroke-width="0.8" stroke-linecap="round" stroke-linejoin="round" /><path d="M742.6 72.6L748 75.2L753.4 72.6" fill="none" stroke="#8a8a8a" stroke-width="0.8" stroke-linecap="round" stroke-linejoin="round" /><path d="M742.6 75.2L748 77.8L753.4 75.2" fill="none" stroke="#8a8a8a" stroke-width="0.8" stroke-linecap="round" stroke-linejoin="round" /><path d="M747.2 88.4L752 90.4L747.2 92.4L742.6 90.4Z" fill="none" stroke="#474747" stroke-width="0.9" stroke-linecap="round" stroke-linejoin="round" /><path d="M742.6 92.4L746 93.9M742.6 94.4L745.4 95.6" fill="none" stroke="#474747" stroke-width="0.9" stroke-linecap="round" stroke-linejoin="round" /><circle cx="750" cy="95.2" r="3" fill="#fff" stroke="#2488d8" stroke-width="1.3"/><path d="M750 91.2V92.6M750 97.8V99.2M746 95.2H747.4M752.6 95.2H754" fill="none" stroke="#2488d8" stroke-width="1.1" stroke-linecap="round" stroke-linejoin="round" /><circle cx="750" cy="95.2" r=".9" fill="#2488d8"/><path d="M752.04 114.10L753.19 114.85A5.20 5.20 0 0 1 752.76 115.91L751.41 115.62A3.90 3.90 0 0 1 750.42 116.61L750.71 117.96A5.20 5.20 0 0 1 749.65 118.39L748.90 117.24A3.90 3.90 0 0 1 747.50 117.24L746.75 118.39A5.20 5.20 0 0 1 745.69 117.96L745.98 116.61A3.90 3.90 0 0 1 744.99 115.62L743.64 115.91A5.20 5.20 0 0 1 743.21 114.85L744.36 114.10A3.90 3.90 0 0 1 744.36 112.70L743.21 111.95A5.20 5.20 0 0 1 743.64 110.89L744.99 111.18A3.90 3.90 0 0 1 745.98 110.19L745.69 108.84A5.20 5.20 0 0 1 746.75 108.41L747.50 109.56A3.90 3.90 0 0 1 748.90 109.56L749.65 108.41A5.20 5.20 0 0 1 750.71 108.84L750.42 110.19A3.90 3.90 0 0 1 751.41 111.18L752.76 110.89A5.20 5.20 0 0 1 753.19 111.95L752.04 112.70A3.90 3.90 0 0 1 752.04 114.10Z" fill="none" stroke="#474747" stroke-width=".9" stroke-linejoin="round" clip-path="url(#tclip)"/><clipPath id="tclip"><path d="M740 105H756V112.6H749.5L743.5 121H740Z"/></clipPath><path d="M745.8 112.2L746.4 114.6" fill="none" stroke="#474747" stroke-width="0.8" stroke-linecap="round" stroke-linejoin="round" /><path d="M745.6 118.4L749.4 114.8A2.2 2.2 0 0 1 751.8 111.8L750.6 113.2L751 114.2L752 114.6L753.4 113.2A2.2 2.2 0 0 1 750.4 115.8L746.8 119.6A.8 .8 0 0 1 745.6 118.4Z" fill="none" stroke="#2488d8" stroke-width="1" stroke-linecap="round" stroke-linejoin="round" fill="#2488d8" fill-opacity=".35"/><path d="M869.37 80.07L871.48 81.56A10.60 10.60 0 0 1 870.59 83.71L868.05 83.26A8.20 8.20 0 0 1 865.96 85.35L866.41 87.89A10.60 10.60 0 0 1 864.26 88.78L862.77 86.67A8.20 8.20 0 0 1 859.83 86.67L858.34 88.78A10.60 10.60 0 0 1 856.19 87.89L856.64 85.35A8.20 8.20 0 0 1 854.55 83.26L852.01 83.71A10.60 10.60 0 0 1 851.12 81.56L853.23 80.07A8.20 8.20 0 0 1 853.23 77.13L851.12 75.64A10.60 10.60 0 0 1 852.01 73.49L854.55 73.94A8.20 8.20 0 0 1 856.64 71.85L856.19 69.31A10.60 10.60 0 0 1 858.34 68.42L859.83 70.53A8.20 8.20 0 0 1 862.77 70.53L864.26 68.42A10.60 10.60 0 0 1 866.41 69.31L865.96 71.85A8.20 8.20 0 0 1 868.05 73.94L870.59 73.49A10.60 10.60 0 0 1 871.48 75.64L869.37 77.13A8.20 8.20 0 0 1 869.37 80.07Z" fill="none" stroke="#474747" stroke-width="1" stroke-linejoin="round"/><circle cx="861.3" cy="78.6" r="3.1" fill="none" stroke="#474747"/><rect x="894.5" y="70.8" width="10.4" height="4.8" rx="2.4" fill="#4a4a4a"/><circle cx="902.3" cy="73.2" r="1.1" fill="#fff"/><path d="M898 98.4H895.4A1.2 1.2 0 0 1 894.2 97.2V89.6A1.2 1.2 0 0 1 895.4 88.4H899.6L902.4 91.2V92.8" fill="none" stroke="#474747" stroke-width="1" stroke-linecap="round" stroke-linejoin="round" /><path d="M899.6 88.6V90.2A1 1 0 0 0 900.6 91.2H902.2" fill="none" stroke="#474747" stroke-width="0.8" stroke-linecap="round" stroke-linejoin="round" /><ellipse cx="901.8" cy="96.5" rx="3.3" ry="2.3" fill="#9ccbf0" stroke="#2488d8" stroke-width="1"/><circle cx="901.8" cy="96.5" r=".9" fill="#2488d8"/><path d="M996.4 88.2H993.5A2 2 0 0 1 991.5 86.2V70.4A2 2 0 0 1 993.5 68.4H1006.8A2 2 0 0 1 1008.8 70.4V75" fill="none" stroke="#474747" stroke-width="1" stroke-linecap="round" stroke-linejoin="round" /><path d="M995 72.6H1005.4M995 77.8H1001.4" fill="none" stroke="#474747" stroke-width="1.1" stroke-linecap="round" stroke-linejoin="round" stroke="#6a6a6a"/><path d="M1002.6 86.8V82.6A1.6 1.6 0 0 1 1004.2 81H1011.2M1008.6 78.2L1011.6 81L1008.6 83.8" fill="none" stroke="#2488d8" stroke-width="1.3" stroke-linecap="round" stroke-linejoin="round" /><path d="M1041.6 76.6H1037.6A1.3 1.3 0 0 1 1036.3 75.3V69A1.3 1.3 0 0 1 1037.6 67.7H1044.1A1.3 1.3 0 0 1 1045.4 69V71.6M1036.3 70.4H1045.4" fill="none" stroke="#474747" stroke-width="1" stroke-linecap="round" stroke-linejoin="round" /><path d="M1039.6 71.6V74.4M1038.2 73H1041" fill="none" stroke="#474747" stroke-width="0.9" stroke-linecap="round" stroke-linejoin="round" /><circle cx="1045" cy="75.6" r="2.5" fill="#fff" stroke="#3aa655" stroke-width="1.1"/><path d="M1045 74.4V76.8" fill="none" stroke="#3aa655" stroke-width="1" stroke-linecap="round" stroke-linejoin="round" /><path d="M1041 97.2H1037.6A1.3 1.3 0 0 1 1036.3 95.9V89.3A1.3 1.3 0 0 1 1037.6 88H1044.8A1.3 1.3 0 0 1 1046.1 89.3V92M1036.3 90.8H1046.1" fill="none" stroke="#474747" stroke-width="1" stroke-linecap="round" stroke-linejoin="round" /><circle cx="1042.4" cy="93.6" r="1.7" fill="none" stroke="#2488d8" stroke-width="1.1"/><path d="M1043.8 95L1046.6 97.8" fill="none" stroke="#2488d8" stroke-width="1.7" stroke-linecap="round" stroke-linejoin="round" /><path d="M1045.63 114.54L1046.69 115.28A5.30 5.30 0 0 1 1046.24 116.35L1044.97 116.13A4.10 4.10 0 0 1 1043.93 117.17L1044.15 118.44A5.30 5.30 0 0 1 1043.08 118.89L1042.34 117.83A4.10 4.10 0 0 1 1040.86 117.83L1040.12 118.89A5.30 5.30 0 0 1 1039.05 118.44L1039.27 117.17A4.10 4.10 0 0 1 1038.23 116.13L1036.96 116.35A5.30 5.30 0 0 1 1036.51 115.28L1037.57 114.54A4.10 4.10 0 0 1 1037.57 113.06L1036.51 112.32A5.30 5.30 0 0 1 1036.96 111.25L1038.23 111.47A4.10 4.10 0 0 1 1039.27 110.43L1039.05 109.16A5.30 5.30 0 0 1 1040.12 108.71L1040.86 109.77A4.10 4.10 0 0 1 1042.34 109.77L1043.08 108.71A5.30 5.30 0 0 1 1044.15 109.16L1043.93 110.43A4.10 4.10 0 0 1 1044.97 111.47L1046.24 111.25A5.30 5.30 0 0 1 1046.69 112.32L1045.63 113.06A4.10 4.10 0 0 1 1045.63 114.54Z" fill="none" stroke="#474747" stroke-width=".9" stroke-linejoin="round"/><circle cx="1041.6" cy="113.8" r="1.5" fill="none" stroke="#474747" stroke-width=".9"/><path d="M1176 70.2L1189.6 67.6V88.6L1176 86.2Z" fill="none" stroke="#474747" stroke-width="0.95" stroke-linecap="round" stroke-linejoin="round" /><path d="M1192 69.2H1195.4A1.2 1.2 0 0 1 1196.6 70.4V73.4M1192 70.4V71.2" fill="none" stroke="#474747" stroke-width="0.9" stroke-linecap="round" stroke-linejoin="round" /><text x="1179" y="83" font-family="Liberation Sans,sans-serif" font-size="12.5" fill="#4a4a4a">S</text><g transform="rotate(40 1192.4 82)"><rect x="1189.6" y="74.2" width="5.6" height="5.6" rx="1.6" fill="#5aa7e6" stroke="#2488d8" stroke-width=".8"/><rect x="1189.6" y="82.6" width="5.6" height="5.4" rx="1.6" fill="#5aa7e6" stroke="#2488d8" stroke-width=".8"/><path d="M1191.2 79.8V82.6M1193.6 79.8V82.6M1192.4 88V91.4M1192.4 74.2V71.6" stroke="#2488d8" stroke-width=".9" fill="none"/></g></svg>
<!-- p_formula -->
<div class="b" style="left:6.6px;top:145.5px;width:78.5px;height:19px;background:#fff;border-radius:4px;box-shadow:0 0 0 .6px #dcdcdc;"></div><span class="t" style="font-size:10.3px;color:#333;top:152.00px;left:11.13px;transform:scaleX(0.9322);-webkit-text-stroke:.15px #333;">C5</span><svg class="b" style="left:72.6px;top:153.4px;" width="9" height="6" viewBox="0 0 9 6"><path d="M.7 .8L4.4 4.5L8.1 .8" fill="none" stroke="#444" stroke-width="1"/></svg><div class="b" style="left:92.4px;top:151.1px;width:1.8px;height:1.8px;background:#444;border-radius:50%;"></div><div class="b" style="left:92.4px;top:154.6px;width:1.8px;height:1.8px;background:#444;border-radius:50%;"></div><div class="b" style="left:92.4px;top:158.1px;width:1.8px;height:1.8px;background:#444;border-radius:50%;"></div><div class="b" style="left:101.6px;top:145.5px;width:56.9px;height:19px;background:#fff;border-radius:4px;box-shadow:0 0 0 .6px #dcdcdc;"></div><svg class="b" style="left:106.4px;top:150.4px;" width="10" height="10" viewBox="0 0 10 10"><path d="M.5 .5L9.3 9.3M9.3 .5L.5 9.3" fill="none" stroke="#bdbdbd" stroke-width=".9"/></svg><svg class="b" style="left:123.6px;top:150.4px;" width="13" height="10" viewBox="0 0 13 10"><path d="M.6 5.4L4.2 9L12.2 .8" fill="none" stroke="#bdbdbd" stroke-width=".9"/></svg><span class="t" style="font-size:14px;color:#2b2b2b;top:149.00px;font-style:italic;font-family:'Liberation Serif',serif;left:142.63px;transform:scaleX(1.2592);-webkit-text-stroke:.12px #2b2b2b;">fx</span><div class="b" style="left:162.7px;top:145.5px;width:1329.8px;height:19px;background:#fff;border-radius:4px;box-shadow:0 0 0 .6px #dcdcdc;"></div><span class="t" style="font-size:10.5px;color:#222;top:151.00px;left:171.42px;transform:scaleX(1.0461);-webkit-text-stroke:.15px #222;">C:\Users\MikeW\OneDrive - insightsoftware\Desktop\Spreadsheet Server Backup</span><svg class="b" style="left:1482px;top:151.1px;" width="9" height="6" viewBox="0 0 9 6"><path d="M.6 .7L4.4 4.4L8.2 .7" fill="none" stroke="#444" stroke-width="1.15"/></svg>
<!-- p_grid -->
<svg class="b" style="left:0px;top:0px;" width="1500" height="844" viewBox="0 0 1500 844"><rect x="0" y="186.2" width="1482.6" height="614.6" fill="#fff"/><rect x="0" y="171.1" width="1482.6" height="15.1" fill="#efefef"/><rect x="0" y="186.2" width="19.7" height="614.6" fill="#efefef"/><rect x="156" y="171.1" width="217.5" height="15.1" fill="#d0d0d0"/><rect x="0" y="263.28" width="19.7" height="14.85" fill="#d0d0d0"/><rect x="83.98" y="186.2" width=".85" height="614.6" fill="#dedede"/><rect x="155.58" y="186.2" width=".85" height="614.6" fill="#dedede"/><rect x="373.08" y="186.2" width=".85" height="614.6" fill="#dedede"/><rect x="518.08" y="186.2" width=".85" height="614.6" fill="#dedede"/><rect x="576.98" y="186.2" width=".85" height="614.6" fill="#dedede"/><rect x="690.08" y="186.2" width=".85" height="614.6" fill="#dedede"/><rect x="925.08" y="186.2" width=".85" height="614.6" fill="#dedede"/><rect x="1167.58" y="186.2" width=".85" height="614.6" fill="#dedede"/><rect x="1229.18" y="186.2" width=".85" height="614.6" fill="#dedede"/><rect x="1280.18" y="186.2" width=".85" height="614.6" fill="#dedede"/><rect x="1330.08" y="186.2" width=".85" height="614.6" fill="#dedede"/><rect x="1380.08" y="186.2" width=".85" height="614.6" fill="#dedede"/><rect x="1460.08" y="186.2" width=".85" height="614.6" fill="#dedede"/><rect x="19.7" y="201.14" width="1462.9" height=".85" fill="#dedede"/><rect x="19.7" y="232.39" width="1462.9" height=".85" fill="#dedede"/><rect x="19.7" y="248.02" width="1462.9" height=".85" fill="#dedede"/><rect x="19.7" y="262.86" width="1462.9" height=".85" fill="#dedede"/><rect x="19.7" y="277.71" width="1462.9" height=".85" fill="#dedede"/><rect x="19.7" y="292.55" width="1462.9" height=".85" fill="#dedede"/><rect x="19.7" y="307.39" width="1462.9" height=".85" fill="#dedede"/><rect x="19.7" y="322.24" width="1462.9" height=".85" fill="#dedede"/><rect x="19.7" y="337.08" width="1462.9" height=".85" fill="#dedede"/><rect x="19.7" y="352.71" width="1462.9" height=".85" fill="#dedede"/><rect x="19.7" y="368.335" width="1462.9" height=".85" fill="#dedede"/><rect x="19.7" y="383.96" width="1462.9" height=".85" fill="#dedede"/><rect x="19.7" y="399.585" width="1462.9" height=".85" fill="#dedede"/><rect x="19.7" y="415.21" width="1462.9" height=".85" fill="#dedede"/><rect x="19.7" y="430.835" width="1462.9" height=".85" fill="#dedede"/><rect x="19.7" y="446.46" width="1462.9" height=".85" fill="#dedede"/><rect x="19.7" y="462.085" width="1462.9" height=".85" fill="#dedede"/><rect x="19.7" y="477.71" width="1462.9" height=".85" fill="#dedede"/><rect x="19.7" y="493.335" width="1462.9" height=".85" fill="#dedede"/><rect x="19.7" y="508.96" width="1462.9" height=".85" fill="#dedede"/><rect x="19.7" y="524.585" width="1462.9" height=".85" fill="#dedede"/><rect x="19.7" y="540.21" width="1462.9" height=".85" fill="#dedede"/><rect x="19.7" y="555.835" width="1462.9" height=".85" fill="#dedede"/><rect x="19.7" y="571.46" width="1462.9" height=".85" fill="#dedede"/><rect x="19.7" y="587.085" width="1462.9" height=".85" fill="#dedede"/><rect x="19.7" y="602.71" width="1462.9" height=".85" fill="#dedede"/><rect x="19.7" y="618.335" width="1462.9" height=".85" fill="#dedede"/><rect x="19.7" y="633.96" width="1462.9" height=".85" fill="#dedede"/><rect x="19.7" y="649.585" width="1462.9" height=".85" fill="#dedede"/><rect x="19.7" y="665.21" width="1462.9" height=".85" fill="#dedede"/><rect x="19.7" y="680.835" width="1462.9" height=".85" fill="#dedede"/><rect x="19.7" y="696.46" width="1462.9" height=".85" fill="#dedede"/><rect x="19.7" y="712.085" width="1462.9" height=".85" fill="#dedede"/><rect x="19.7" y="727.71" width="1462.9" height=".85" fill="#dedede"/><rect x="19.7" y="743.335" width="1462.9" height=".85" fill="#dedede"/><rect x="19.7" y="758.96" width="1462.9" height=".85" fill="#dedede"/><rect x="19.7" y="774.585" width="1462.9" height=".85" fill="#dedede"/><rect x="19.7" y="790.21" width="1462.9" height=".85" fill="#dedede"/><rect x="83.95" y="171.1" width=".9" height="15.1" fill="#b4b4b4"/><rect x="155.55" y="171.1" width=".9" height="15.1" fill="#b4b4b4"/><rect x="373.05" y="171.1" width=".9" height="15.1" fill="#b4b4b4"/><rect x="518.05" y="171.1" width=".9" height="15.1" fill="#b4b4b4"/><rect x="576.95" y="171.1" width=".9" height="15.1" fill="#b4b4b4"/><rect x="690.05" y="171.1" width=".9" height="15.1" fill="#b4b4b4"/><rect x="925.05" y="171.1" width=".9" height="15.1" fill="#b4b4b4"/><rect x="1167.55" y="171.1" width=".9" height="15.1" fill="#b4b4b4"/><rect x="1229.15" y="171.1" width=".9" height="15.1" fill="#b4b4b4"/><rect x="1280.15" y="171.1" width=".9" height="15.1" fill="#b4b4b4"/><rect x="1330.05" y="171.1" width=".9" height="15.1" fill="#b4b4b4"/><rect x="1380.05" y="171.1" width=".9" height="15.1" fill="#b4b4b4"/><rect x="1460.05" y="171.1" width=".9" height="15.1" fill="#b4b4b4"/><rect x="0" y="201.11" width="19.7" height=".9" fill="#b4b4b4"/><rect x="0" y="232.36" width="19.7" height=".9" fill="#b4b4b4"/><rect x="0" y="247.99" width="19.7" height=".9" fill="#b4b4b4"/><rect x="0" y="262.83" width="19.7" height=".9" fill="#b4b4b4"/><rect x="0" y="277.68" width="19.7" height=".9" fill="#b4b4b4"/><rect x="0" y="292.52" width="19.7" height=".9" fill="#b4b4b4"/><rect x="0" y="307.36" width="19.7" height=".9" fill="#b4b4b4"/><rect x="0" y="322.21" width="19.7" height=".9" fill="#b4b4b4"/><rect x="0" y="337.05" width="19.7" height=".9" fill="#b4b4b4"/><rect x="0" y="352.68" width="19.7" height=".9" fill="#b4b4b4"/><rect x="0" y="368.305" width="19.7" height=".9" fill="#b4b4b4"/><rect x="0" y="383.93" width="19.7" height=".9" fill="#b4b4b4"/><rect x="0" y="399.555" width="19.7" height=".9" fill="#b4b4b4"/><rect x="0" y="415.18" width="19.7" height=".9" fill="#b4b4b4"/><rect x="0" y="430.805" width="19.7" height=".9" fill="#b4b4b4"/><rect x="0" y="446.43" width="19.7" height=".9" fill="#b4b4b4"/><rect x="0" y="462.055" width="19.7" height=".9" fill="#b4b4b4"/><rect x="0" y="477.68" width="19.7" height=".9" fill="#b4b4b4"/><rect x="0" y="493.305" width="19.7" height=".9" fill="#b4b4b4"/><rect x="0" y="508.93" width="19.7" height=".9" fill="#b4b4b4"/><rect x="0" y="524.555" width="19.7" height=".9" fill="#b4b4b4"/><rect x="0" y="540.18" width="19.7" height=".9" fill="#b4b4b4"/><rect x="0" y="555.805" width="19.7" height=".9" fill="#b4b4b4"/><rect x="0" y="571.43" width="19.7" height=".9" fill="#b4b4b4"/><rect x="0" y="587.055" width="19.7" height=".9" fill="#b4b4b4"/><rect x="0" y="602.68" width="19.7" height=".9" fill="#b4b4b4"/><rect x="0" y="618.305" width="19.7" height=".9" fill="#b4b4b4"/><rect x="0" y="633.93" width="19.7" height=".9" fill="#b4b4b4"/><rect x="0" y="649.555" width="19.7" height=".9" fill="#b4b4b4"/><rect x="0" y="665.18" width="19.7" height=".9" fill="#b4b4b4"/><rect x="0" y="680.805" width="19.7" height=".9" fill="#b4b4b4"/><rect x="0" y="696.43" width="19.7" height=".9" fill="#b4b4b4"/><rect x="0" y="712.055" width="19.7" height=".9" fill="#b4b4b4"/><rect x="0" y="727.68" width="19.7" height=".9" fill="#b4b4b4"/><rect x="0" y="743.305" width="19.7" height=".9" fill="#b4b4b4"/><rect x="0" y="758.93" width="19.7" height=".9" fill="#b4b4b4"/><rect x="0" y="774.555" width="19.7" height=".9" fill="#b4b4b4"/><rect x="0" y="790.18" width="19.7" height=".9" fill="#b4b4b4"/><rect x="0" y="185.3" width="1482.6" height="1.3" fill="#a6a6a6"/><rect x="19.1" y="171.1" width="1.1" height="629.7" fill="#a6a6a6"/><rect x="156" y="185" width="217.5" height="1.6" fill="#1e6e42"/><rect x="18.6" y="263.28" width="1.6" height="14.85" fill="#1e6e42"/><path d="M17 174.4V183.2H8Z" fill="#b9b9b9"/><rect x="84.4" y="201.56" width="1398.2" height="31.25" fill="#fecb98"/><rect x="83.9" y="201.01" width="1398.7" height="1.15" fill="#222"/><rect x="83.9" y="232.21" width="1398.7" height="1.15" fill="#222"/><rect x="83.82" y="201.56" width="1.15" height="31.25" fill="#222"/><rect x="155.42" y="201.56" width="1.15" height="31.25" fill="#222"/><rect x="372.92" y="201.56" width="1.15" height="31.25" fill="#222"/><rect x="517.92" y="201.56" width="1.15" height="31.25" fill="#222"/><rect x="576.82" y="201.56" width="1.15" height="31.25" fill="#222"/><rect x="689.92" y="201.56" width="1.15" height="31.25" fill="#222"/><rect x="924.92" y="201.56" width="1.15" height="31.25" fill="#222"/><rect x="1167.42" y="201.56" width="1.15" height="31.25" fill="#222"/><rect x="1229.02" y="201.56" width="1.15" height="31.25" fill="#222"/><rect x="1280.02" y="201.56" width="1.15" height="31.25" fill="#222"/><rect x="1329.92" y="201.56" width="1.15" height="31.25" fill="#222"/><rect x="1379.92" y="201.56" width="1.15" height="31.25" fill="#222"/><rect x="1459.92" y="201.56" width="1.15" height="31.25" fill="#222"/><rect x="156.1" y="263.08" width="217.5" height="15.15" fill="none" stroke="#1e6e42" stroke-width="1.7"/><rect x="371.1" y="275.63" width="5.2" height="5.2" fill="#1e6e42" stroke="#fff" stroke-width=".8"/></svg><span class="t" style="font-size:10.6px;color:#3f3f3f;top:174.00px;left:48.51px;-webkit-text-stroke:.15px #3f3f3f;">A</span><span class="t" style="font-size:10.6px;color:#3f3f3f;top:174.00px;left:116.66px;-webkit-text-stroke:.15px #3f3f3f;">B</span><span class="t" style="font-size:10.6px;color:#1e6e42;top:174.00px;left:260.92px;-webkit-text-stroke:.15px #1e6e42;">C</span><span class="t" style="font-size:10.6px;color:#3f3f3f;top:174.00px;left:442.17px;-webkit-text-stroke:.15px #3f3f3f;">D</span><span class="t" style="font-size:10.6px;color:#3f3f3f;top:174.00px;left:544.41px;-webkit-text-stroke:.15px #3f3f3f;">E</span><span class="t" style="font-size:10.6px;color:#3f3f3f;top:174.00px;left:630.71px;-webkit-text-stroke:.15px #3f3f3f;">F</span><span class="t" style="font-size:10.6px;color:#3f3f3f;top:174.00px;left:803.88px;-webkit-text-stroke:.15px #3f3f3f;">G</span><span class="t" style="font-size:10.6px;color:#3f3f3f;top:174.00px;left:1042.92px;-webkit-text-stroke:.15px #3f3f3f;">H</span><span class="t" style="font-size:10.6px;color:#3f3f3f;top:174.00px;left:1197.32px;-webkit-text-stroke:.15px #3f3f3f;">I</span><span class="t" style="font-size:10.6px;color:#3f3f3f;top:174.00px;left:1252.45px;-webkit-text-stroke:.15px #3f3f3f;">J</span><span class="t" style="font-size:10.6px;color:#3f3f3f;top:174.00px;left:1302.01px;-webkit-text-stroke:.15px #3f3f3f;">K</span><span class="t" style="font-size:10.6px;color:#3f3f3f;top:174.00px;left:1352.55px;-webkit-text-stroke:.15px #3f3f3f;">L</span><span class="t" style="font-size:10.6px;color:#3f3f3f;top:174.00px;left:1416.09px;-webkit-text-stroke:.15px #3f3f3f;">M</span><span class="t" style="font-size:10.5px;color:#3f3f3f;top:190.00px;left:6.62px;transform:scaleX(1.0263);-webkit-text-stroke:.15px #3f3f3f;">1</span><span class="t" style="font-size:10.5px;color:#3f3f3f;top:222.00px;left:6.62px;transform:scaleX(1.0263);-webkit-text-stroke:.15px #3f3f3f;">2</span><span class="t" style="font-size:10.5px;color:#3f3f3f;top:237.00px;left:6.62px;transform:scaleX(1.0263);-webkit-text-stroke:.15px #3f3f3f;">3</span><span class="t" style="font-size:10.5px;color:#3f3f3f;top:252.00px;left:6.62px;transform:scaleX(1.0263);-webkit-text-stroke:.15px #3f3f3f;">4</span><span class="t" style="font-size:10.5px;color:#1e6e42;top:267.00px;left:6.62px;transform:scaleX(1.0263);-webkit-text-stroke:.15px #1e6e42;">5</span><span class="t" style="font-size:10.5px;color:#3f3f3f;top:282.00px;left:6.62px;transform:scaleX(1.0263);-webkit-text-stroke:.15px #3f3f3f;">6</span><span class="t" style="font-size:10.5px;color:#3f3f3f;top:297.00px;left:6.62px;transform:scaleX(1.0263);-webkit-text-stroke:.15px #3f3f3f;">7</span><span class="t" style="font-size:10.5px;color:#3f3f3f;top:311.00px;left:6.62px;transform:scaleX(1.0263);-webkit-text-stroke:.15px #3f3f3f;">8</span><span class="t" style="font-size:10.5px;color:#3f3f3f;top:326.00px;left:6.62px;transform:scaleX(1.0263);-webkit-text-stroke:.15px #3f3f3f;">9</span><span class="t" style="font-size:10.5px;color:#3f3f3f;top:342.00px;left:3.92px;transform:scaleX(0.9752);-webkit-text-stroke:.15px #3f3f3f;">10</span><span class="t" style="font-size:10.5px;color:#3f3f3f;top:357.00px;left:3.92px;transform:scaleX(1.0450);-webkit-text-stroke:.15px #3f3f3f;">11</span><span class="t" style="font-size:10.5px;color:#3f3f3f;top:373.00px;left:3.92px;transform:scaleX(0.9752);-webkit-text-stroke:.15px #3f3f3f;">12</span><span class="t" style="font-size:10.5px;color:#3f3f3f;top:389.00px;left:3.92px;transform:scaleX(0.9752);-webkit-text-stroke:.15px #3f3f3f;">13</span><span class="t" style="font-size:10.5px;color:#3f3f3f;top:404.00px;left:3.92px;transform:scaleX(0.9752);-webkit-text-stroke:.15px #3f3f3f;">14</span><span class="t" style="font-size:10.5px;color:#3f3f3f;top:420.00px;left:3.92px;transform:scaleX(0.9752);-webkit-text-stroke:.15px #3f3f3f;">15</span><span class="t" style="font-size:10.5px;color:#3f3f3f;top:436.00px;left:3.92px;transform:scaleX(0.9752);-webkit-text-stroke:.15px #3f3f3f;">16</span><span class="t" style="font-size:10.5px;color:#3f3f3f;top:451.00px;left:3.92px;transform:scaleX(0.9752);-webkit-text-stroke:.15px #3f3f3f;">17</span><span class="t" style="font-size:10.5px;color:#3f3f3f;top:467.00px;left:3.92px;transform:scaleX(0.9752);-webkit-text-stroke:.15px #3f3f3f;">18</span><span class="t" style="font-size:10.5px;color:#3f3f3f;top:482.00px;left:3.92px;transform:scaleX(0.9752);-webkit-text-stroke:.15px #3f3f3f;">19</span><span class="t" style="font-size:10.5px;color:#3f3f3f;top:498.00px;left:3.92px;transform:scaleX(0.9752);-webkit-text-stroke:.15px #3f3f3f;">20</span><span class="t" style="font-size:10.5px;color:#3f3f3f;top:514.00px;left:3.92px;transform:scaleX(0.9752);-webkit-text-stroke:.15px #3f3f3f;">21</span><span class="t" style="font-size:10.5px;color:#3f3f3f;top:529.00px;left:3.92px;transform:scaleX(0.9752);-webkit-text-stroke:.15px #3f3f3f;">22</span><span class="t" style="font-size:10.5px;color:#3f3f3f;top:545.00px;left:3.92px;transform:scaleX(0.9752);-webkit-text-stroke:.15px #3f3f3f;">23</span><span class="t" style="font-size:10.5px;color:#3f3f3f;top:561.00px;left:3.92px;transform:scaleX(0.9752);-webkit-text-stroke:.15px #3f3f3f;">24</span><span class="t" style="font-size:10.5px;color:#3f3f3f;top:576.00px;left:3.92px;transform:scaleX(0.9752);-webkit-text-stroke:.15px #3f3f3f;">25</span><span class="t" style="font-size:10.5px;color:#3f3f3f;top:592.00px;left:3.92px;transform:scaleX(0.9752);-webkit-text-stroke:.15px #3f3f3f;">26</span><span class="t" style="font-size:10.5px;color:#3f3f3f;top:607.00px;left:3.92px;transform:scaleX(0.9752);-webkit-text-stroke:.15px #3f3f3f;">27</span><span class="t" style="font-size:10.5px;color:#3f3f3f;top:623.00px;left:3.92px;transform:scaleX(0.9752);-webkit-text-stroke:.15px #3f3f3f;">28</span><span class="t" style="font-size:10.5px;color:#3f3f3f;top:639.00px;left:3.92px;transform:scaleX(0.9752);-webkit-text-stroke:.15px #3f3f3f;">29</span><span class="t" style="font-size:10.5px;color:#3f3f3f;top:654.00px;left:3.92px;transform:scaleX(0.9752);-webkit-text-stroke:.15px #3f3f3f;">30</span><span class="t" style="font-size:10.5px;color:#3f3f3f;top:670.00px;left:3.92px;transform:scaleX(0.9752);-webkit-text-stroke:.15px #3f3f3f;">31</span><span class="t" style="font-size:10.5px;color:#3f3f3f;top:686.00px;left:3.92px;transform:scaleX(0.9752);-webkit-text-stroke:.15px #3f3f3f;">32</span><span class="t" style="font-size:10.5px;color:#3f3f3f;top:701.00px;left:3.92px;transform:scaleX(0.9752);-webkit-text-stroke:.15px #3f3f3f;">33</span><span class="t" style="font-size:10.5px;color:#3f3f3f;top:717.00px;left:3.92px;transform:scaleX(0.9752);-webkit-text-stroke:.15px #3f3f3f;">34</span><span class="t" style="font-size:10.5px;color:#3f3f3f;top:732.00px;left:3.92px;transform:scaleX(0.9752);-webkit-text-stroke:.15px #3f3f3f;">35</span><span class="t" style="font-size:10.5px;color:#3f3f3f;top:748.00px;left:3.92px;transform:scaleX(0.9752);-webkit-text-stroke:.15px #3f3f3f;">36</span><span class="t" style="font-size:10.5px;color:#3f3f3f;top:764.00px;left:3.92px;transform:scaleX(0.9752);-webkit-text-stroke:.15px #3f3f3f;">37</span><span class="t" style="font-size:10.5px;color:#3f3f3f;top:779.00px;left:3.92px;transform:scaleX(0.9752);-webkit-text-stroke:.15px #3f3f3f;">38</span><div class="b" style="left:0;top:793.955px;width:20px;height:6.845px;overflow:hidden;"><span class="t" style="font-size:10.5px;color:#3f3f3f;top:1.00px;left:4.06px;-webkit-text-stroke:.15px #3f3f3f;">39</span></div><span class="t" style="font-size:10.5px;color:#1a1a1a;top:206.00px;left:91.82px;transform:scaleX(1.0774);-webkit-text-stroke:.15px #1a1a1a;">Destination</span><span class="t" style="font-size:10.5px;color:#1a1a1a;top:221.00px;left:108.42px;transform:scaleX(1.0278);-webkit-text-stroke:.15px #1a1a1a;">Type</span><span class="t" style="font-size:10.5px;color:#1a1a1a;top:221.00px;left:177.42px;transform:scaleX(1.0460);-webkit-text-stroke:.15px #1a1a1a;">Destination Folder/Email Addresses</span><span class="t" style="font-size:10.5px;color:#1a1a1a;top:221.00px;left:401.72px;transform:scaleX(1.0507);-webkit-text-stroke:.15px #1a1a1a;">Destination Name</span><span class="t" style="font-size:10.5px;color:#1a1a1a;top:206.00px;left:523.02px;transform:scaleX(1.0791);-webkit-text-stroke:.15px #1a1a1a;">Destinatio</span><span class="t" style="font-size:10.5px;color:#1a1a1a;top:221.00px;left:521.42px;transform:scaleX(1.0240);-webkit-text-stroke:.15px #1a1a1a;">n File Type</span><span class="t" style="font-size:10.5px;color:#1a1a1a;top:206.00px;left:584.42px;transform:scaleX(1.0302);-webkit-text-stroke:.15px #1a1a1a;">Convert Formulas to</span><span class="t" style="font-size:10.5px;color:#1a1a1a;top:221.00px;left:617.42px;transform:scaleX(1.0533);-webkit-text-stroke:.15px #1a1a1a;">Values</span><span class="t" style="font-size:10.5px;color:#1a1a1a;top:221.00px;left:748.42px;transform:scaleX(1.0693);-webkit-text-stroke:.15px #1a1a1a;">Modify Sheet!Cell:Value</span><span class="t" style="font-size:10.5px;color:#1a1a1a;top:221.00px;left:998.42px;transform:scaleX(1.0368);-webkit-text-stroke:.15px #1a1a1a;">Specify Worksheets</span><span class="t" style="font-size:10.5px;color:#1a1a1a;top:206.00px;left:1191.42px;transform:scaleX(1.0619);-webkit-text-stroke:.15px #1a1a1a;">Zip</span><span class="t" style="font-size:10.5px;color:#1a1a1a;top:221.00px;left:1170.42px;transform:scaleX(1.0755);-webkit-text-stroke:.15px #1a1a1a;">Destination</span><span class="t" style="font-size:10.5px;color:#1a1a1a;top:206.00px;left:1231.12px;transform:scaleX(1.0323);-webkit-text-stroke:.15px #1a1a1a;">Hide Zero</span><span class="t" style="font-size:10.5px;color:#1a1a1a;top:221.00px;left:1242.02px;transform:scaleX(1.0274);-webkit-text-stroke:.15px #1a1a1a;">Lines</span><span class="t" style="font-size:10.5px;color:#1a1a1a;top:206.00px;left:1281.92px;transform:scaleX(1.0461);-webkit-text-stroke:.15px #1a1a1a;">Generate</span><span class="t" style="font-size:10.5px;color:#1a1a1a;top:221.00px;left:1285.42px;transform:scaleX(0.9401);-webkit-text-stroke:.15px #1a1a1a;">All GXEs</span><span class="t" style="font-size:10.5px;color:#1a1a1a;top:206.00px;left:1332.42px;transform:scaleX(1.0552);-webkit-text-stroke:.15px #1a1a1a;">Generate</span><span class="t" style="font-size:10.5px;color:#1a1a1a;top:221.00px;left:1332.12px;transform:scaleX(0.9376);-webkit-text-stroke:.15px #1a1a1a;">All GEXDs</span><span class="t" style="font-size:10.5px;color:#1a1a1a;top:221.00px;left:1387.42px;transform:scaleX(1.0217);-webkit-text-stroke:.15px #1a1a1a;">Email Subject</span><span class="t" style="font-size:10.5px;color:#1d1d1d;top:252.00px;left:21.02px;transform:scaleX(0.8921);-webkit-text-stroke:.15px #1d1d1d;">DMSPECS&gt;</span><span class="t" style="font-size:10.5px;color:#1d1d1d;top:252.00px;left:85.82px;transform:scaleX(1.0279);-webkit-text-stroke:.15px #1d1d1d;">Email</span><span class="t" style="font-size:10.5px;color:#1d1d1d;top:252.00px;left:158.02px;transform:scaleX(0.9717);-webkit-text-stroke:.15px #1d1d1d;">Anna Sagan;</span><span class="t" style="font-size:10.5px;color:#1d1d1d;top:252.00px;left:375.02px;transform:scaleX(1.0076);-webkit-text-stroke:.15px #1d1d1d;">Annas Reports</span><span class="t" style="font-size:10.5px;color:#1d1d1d;top:252.00px;left:520.02px;transform:scaleX(0.9887);-webkit-text-stroke:.15px #1d1d1d;">Excel</span><span class="t" style="font-size:10.5px;color:#1d1d1d;top:252.00px;left:579.02px;transform:scaleX(1.0280);-webkit-text-stroke:.15px #1d1d1d;">Global Only</span><span class="t" style="font-size:10.5px;color:#1d1d1d;top:252.00px;left:692.42px;transform:scaleX(1.0081);-webkit-text-stroke:.15px #1d1d1d;">Profit &amp; Loss!N12:01,Profit &amp; Loss!N13:410</span><span class="t" style="font-size:10.5px;color:#1d1d1d;top:252.00px;left:927.42px;-webkit-text-stroke:.15px #1d1d1d;">Profit &amp; Loss,Rolling 12,KPIs</span><span class="t" style="font-size:10.5px;color:#1d1d1d;top:252.00px;left:1169.92px;transform:scaleX(1.0157);-webkit-text-stroke:.15px #1d1d1d;">NO</span><span class="t" style="font-size:10.5px;color:#1d1d1d;top:252.00px;left:1231.52px;transform:scaleX(1.0094);-webkit-text-stroke:.15px #1d1d1d;">NO</span><span class="t" style="font-size:10.5px;color:#1d1d1d;top:252.00px;left:1282.42px;transform:scaleX(1.0157);-webkit-text-stroke:.15px #1d1d1d;">NO</span><span class="t" style="font-size:10.5px;color:#1d1d1d;top:252.00px;left:1332.12px;transform:scaleX(0.8136);-webkit-text-stroke:.15px #1d1d1d;">YES</span><span class="t" style="font-size:10.5px;color:#1d1d1d;top:267.00px;left:21.02px;transform:scaleX(0.8921);-webkit-text-stroke:.15px #1d1d1d;">DMSPECS&gt;</span><span class="t" style="font-size:10.5px;color:#1d1d1d;top:267.00px;left:85.82px;transform:scaleX(0.9958);-webkit-text-stroke:.15px #1d1d1d;">File Save</span><div class="b" style="left:157.6px;top:264px;width:214.9px;height:15px;overflow:hidden;"><span class="t" style="font-size:10.5px;color:#1d1d1d;top:3.00px;left:0.42px;transform:scaleX(1.0787);-webkit-text-stroke:.15px #1d1d1d;">C:\Users\MikeW\OneDrive - insightsoftware</span></div><span class="t" style="font-size:10.5px;color:#1d1d1d;top:267.00px;left:375.02px;transform:scaleX(1.0178);-webkit-text-stroke:.15px #1d1d1d;">Backup Consolidated Reports</span><span class="t" style="font-size:10.5px;color:#1d1d1d;top:267.00px;left:520.02px;transform:scaleX(0.9237);-webkit-text-stroke:.15px #1d1d1d;">PDF</span><span class="t" style="font-size:10.5px;color:#1d1d1d;top:267.00px;left:579.02px;transform:scaleX(1.0349);-webkit-text-stroke:.15px #1d1d1d;">All Formulas</span><span class="t" style="font-size:10.5px;color:#1d1d1d;top:267.00px;left:692.42px;transform:scaleX(1.0347);-webkit-text-stroke:.15px #1d1d1d;">Profit &amp; Loss!N12:*,Profit &amp; Loss!N13:*</span><span class="t" style="font-size:10.5px;color:#1d1d1d;top:267.00px;left:927.42px;-webkit-text-stroke:.15px #1d1d1d;">Profit &amp; Loss,Rolling 12,KPIs</span><span class="t" style="font-size:10.5px;color:#1d1d1d;top:267.00px;left:1169.92px;transform:scaleX(1.0157);-webkit-text-stroke:.15px #1d1d1d;">NO</span><span class="t" style="font-size:10.5px;color:#1d1d1d;top:267.00px;left:1231.52px;transform:scaleX(1.0094);-webkit-text-stroke:.15px #1d1d1d;">NO</span><span class="t" style="font-size:10.5px;color:#1d1d1d;top:267.00px;left:1282.42px;transform:scaleX(1.0157);-webkit-text-stroke:.15px #1d1d1d;">NO</span><span class="t" style="font-size:10.5px;color:#1d1d1d;top:267.00px;left:1332.12px;transform:scaleX(0.8136);-webkit-text-stroke:.15px #1d1d1d;">YES</span><span class="t" style="font-size:10.5px;color:#1d1d1d;top:282.00px;left:21.02px;transform:scaleX(0.8921);-webkit-text-stroke:.15px #1d1d1d;">DMSPECS&gt;</span><span class="t" style="font-size:10.5px;color:#1d1d1d;top:282.00px;left:85.82px;transform:scaleX(1.0279);-webkit-text-stroke:.15px #1d1d1d;">Email</span><span class="t" style="font-size:10.5px;color:#1d1d1d;top:282.00px;left:158.02px;transform:scaleX(1.0309);-webkit-text-stroke:.15px #1d1d1d;">Sherry Puckett;</span><span class="t" style="font-size:10.5px;color:#1d1d1d;top:282.00px;left:375.02px;transform:scaleX(1.0071);-webkit-text-stroke:.15px #1d1d1d;">Sherrys Reports</span><span class="t" style="font-size:10.5px;color:#1d1d1d;top:282.00px;left:520.02px;transform:scaleX(0.9887);-webkit-text-stroke:.15px #1d1d1d;">Excel</span><span class="t" style="font-size:10.5px;color:#1d1d1d;top:282.00px;left:579.02px;transform:scaleX(1.0319);-webkit-text-stroke:.15px #1d1d1d;">None (No Conversion)</span><span class="t" style="font-size:10.5px;color:#1d1d1d;top:282.00px;left:692.42px;transform:scaleX(1.0081);-webkit-text-stroke:.15px #1d1d1d;">Profit &amp; Loss!N12:01,Profit &amp; Loss!N13:410</span><span class="t" style="font-size:10.5px;color:#1d1d1d;top:282.00px;left:927.42px;-webkit-text-stroke:.15px #1d1d1d;">Profit &amp; Loss,Rolling 12,KPIs</span><span class="t" style="font-size:10.5px;color:#1d1d1d;top:282.00px;left:1169.92px;transform:scaleX(1.0157);-webkit-text-stroke:.15px #1d1d1d;">NO</span><span class="t" style="font-size:10.5px;color:#1d1d1d;top:282.00px;left:1231.52px;transform:scaleX(1.0094);-webkit-text-stroke:.15px #1d1d1d;">NO</span><span class="t" style="font-size:10.5px;color:#1d1d1d;top:282.00px;left:1282.42px;transform:scaleX(1.0157);-webkit-text-stroke:.15px #1d1d1d;">NO</span><span class="t" style="font-size:10.5px;color:#1d1d1d;top:282.00px;left:1332.12px;transform:scaleX(0.8136);-webkit-text-stroke:.15px #1d1d1d;">YES</span><span class="t" style="font-size:10.5px;color:#1d1d1d;top:297.00px;left:21.02px;transform:scaleX(0.8921);-webkit-text-stroke:.15px #1d1d1d;">DMSPECS&gt;</span><span class="t" style="font-size:10.5px;color:#1d1d1d;top:297.00px;left:85.82px;transform:scaleX(1.0279);-webkit-text-stroke:.15px #1d1d1d;">Email</span><span class="t" style="font-size:10.5px;color:#1d1d1d;top:297.00px;left:158.02px;transform:scaleX(1.0218);-webkit-text-stroke:.15px #1d1d1d;">Kevin Gibson;</span><span class="t" style="font-size:10.5px;color:#1d1d1d;top:297.00px;left:375.02px;transform:scaleX(1.0168);-webkit-text-stroke:.15px #1d1d1d;">Kevins Reports</span><span class="t" style="font-size:10.5px;color:#1d1d1d;top:297.00px;left:520.02px;transform:scaleX(0.9887);-webkit-text-stroke:.15px #1d1d1d;">Excel</span><span class="t" style="font-size:10.5px;color:#1d1d1d;top:297.00px;left:579.02px;transform:scaleX(1.0280);-webkit-text-stroke:.15px #1d1d1d;">Global Only</span><span class="t" style="font-size:10.5px;color:#1d1d1d;top:297.00px;left:692.42px;transform:scaleX(1.0081);-webkit-text-stroke:.15px #1d1d1d;">Profit &amp; Loss!N12:02,Profit &amp; Loss!N13:420</span><span class="t" style="font-size:10.5px;color:#1d1d1d;top:297.00px;left:927.42px;-webkit-text-stroke:.15px #1d1d1d;">Profit &amp; Loss,Rolling 12,KPIs</span><span class="t" style="font-size:10.5px;color:#1d1d1d;top:297.00px;left:1169.92px;transform:scaleX(1.0157);-webkit-text-stroke:.15px #1d1d1d;">NO</span><span class="t" style="font-size:10.5px;color:#1d1d1d;top:297.00px;left:1231.52px;transform:scaleX(1.0094);-webkit-text-stroke:.15px #1d1d1d;">NO</span><span class="t" style="font-size:10.5px;color:#1d1d1d;top:297.00px;left:1282.42px;transform:scaleX(1.0157);-webkit-text-stroke:.15px #1d1d1d;">NO</span><span class="t" style="font-size:10.5px;color:#1d1d1d;top:297.00px;left:1332.12px;transform:scaleX(0.8136);-webkit-text-stroke:.15px #1d1d1d;">YES</span><span class="t" style="font-size:10.5px;color:#1d1d1d;top:311.00px;left:21.02px;transform:scaleX(0.8921);-webkit-text-stroke:.15px #1d1d1d;">DMSPECS&gt;</span><span class="t" style="font-size:10.5px;color:#1d1d1d;top:311.00px;left:85.82px;transform:scaleX(1.0279);-webkit-text-stroke:.15px #1d1d1d;">Email</span><span class="t" style="font-size:10.5px;color:#1d1d1d;top:311.00px;left:158.02px;transform:scaleX(1.0277);-webkit-text-stroke:.15px #1d1d1d;">Sue Maloney;</span><span class="t" style="font-size:10.5px;color:#1d1d1d;top:311.00px;left:375.02px;transform:scaleX(0.9901);-webkit-text-stroke:.15px #1d1d1d;">Sues Reports</span><span class="t" style="font-size:10.5px;color:#1d1d1d;top:311.00px;left:520.02px;transform:scaleX(0.9887);-webkit-text-stroke:.15px #1d1d1d;">Excel</span><span class="t" style="font-size:10.5px;color:#1d1d1d;top:311.00px;left:579.02px;transform:scaleX(1.0319);-webkit-text-stroke:.15px #1d1d1d;">None (No Conversion)</span><span class="t" style="font-size:10.5px;color:#1d1d1d;top:311.00px;left:692.42px;transform:scaleX(1.0081);-webkit-text-stroke:.15px #1d1d1d;">Profit &amp; Loss!N12:02,Profit &amp; Loss!N13:420</span><span class="t" style="font-size:10.5px;color:#1d1d1d;top:311.00px;left:927.42px;transform:scaleX(1.0143);-webkit-text-stroke:.15px #1d1d1d;">Profit &amp; Loss,Current Ratios,Operating Cash Flow</span><span class="t" style="font-size:10.5px;color:#1d1d1d;top:311.00px;left:1169.92px;transform:scaleX(1.0157);-webkit-text-stroke:.15px #1d1d1d;">NO</span><span class="t" style="font-size:10.5px;color:#1d1d1d;top:311.00px;left:1231.52px;transform:scaleX(1.0094);-webkit-text-stroke:.15px #1d1d1d;">NO</span><span class="t" style="font-size:10.5px;color:#1d1d1d;top:311.00px;left:1282.42px;transform:scaleX(1.0157);-webkit-text-stroke:.15px #1d1d1d;">NO</span><span class="t" style="font-size:10.5px;color:#1d1d1d;top:311.00px;left:1332.12px;transform:scaleX(0.8136);-webkit-text-stroke:.15px #1d1d1d;">YES</span><span class="t" style="font-size:10.5px;color:#1d1d1d;top:326.00px;left:21.02px;transform:scaleX(0.8921);-webkit-text-stroke:.15px #1d1d1d;">DMSPECS&gt;</span><span class="t" style="font-size:10.5px;color:#1d1d1d;top:326.00px;left:85.82px;transform:scaleX(1.1206);-webkit-text-stroke:.15px #1d1d1d;">Print</span><span class="t" style="font-size:10.5px;color:#1d1d1d;top:326.00px;left:158.02px;transform:scaleX(1.0371);-webkit-text-stroke:.15px #1d1d1d;">Printer Floor 4</span><span class="t" style="font-size:10.5px;color:#1d1d1d;top:326.00px;left:375.02px;transform:scaleX(1.0021);-webkit-text-stroke:.15px #1d1d1d;">Dept. 430 Reports</span><span class="t" style="font-size:10.5px;color:#1d1d1d;top:326.00px;left:520.02px;transform:scaleX(0.9237);-webkit-text-stroke:.15px #1d1d1d;">PDF</span><span class="t" style="font-size:10.5px;color:#1d1d1d;top:326.00px;left:579.02px;transform:scaleX(1.0349);-webkit-text-stroke:.15px #1d1d1d;">All Formulas</span><span class="t" style="font-size:10.5px;color:#1d1d1d;top:326.00px;left:692.42px;transform:scaleX(1.0081);-webkit-text-stroke:.15px #1d1d1d;">Profit &amp; Loss!N12:02,Profit &amp; Loss!N13:430</span><span class="t" style="font-size:10.5px;color:#1d1d1d;top:326.00px;left:927.42px;-webkit-text-stroke:.15px #1d1d1d;">Profit &amp; Loss,Rolling 12,KPIs</span><span class="t" style="font-size:10.5px;color:#1d1d1d;top:326.00px;left:1169.92px;transform:scaleX(1.0157);-webkit-text-stroke:.15px #1d1d1d;">NO</span><span class="t" style="font-size:10.5px;color:#1d1d1d;top:326.00px;left:1231.52px;transform:scaleX(1.0094);-webkit-text-stroke:.15px #1d1d1d;">NO</span><span class="t" style="font-size:10.5px;color:#1d1d1d;top:326.00px;left:1282.42px;transform:scaleX(1.0157);-webkit-text-stroke:.15px #1d1d1d;">NO</span><span class="t" style="font-size:10.5px;color:#1d1d1d;top:326.00px;left:1332.12px;transform:scaleX(0.8136);-webkit-text-stroke:.15px #1d1d1d;">YES</span><span class="t" style="font-size:10.5px;color:#1d1d1d;top:342.00px;left:21.02px;transform:scaleX(0.8921);-webkit-text-stroke:.15px #1d1d1d;">DMSPECS&gt;</span><span class="t" style="font-size:10.5px;color:#1d1d1d;top:342.00px;left:85.82px;transform:scaleX(0.9958);-webkit-text-stroke:.15px #1d1d1d;">File Save</span><div class="b" style="left:157.6px;top:339px;width:215.5px;height:15px;overflow:hidden;"><span class="t" style="font-size:10.5px;color:#1d1d1d;top:3.00px;left:0.42px;transform:scaleX(1.0618);-webkit-text-stroke:.15px #1d1d1d;">C:\Users\Mike.Wiley\OneDrive - insightsoftw</span></div><span class="t" style="font-size:10.5px;color:#1d1d1d;top:342.00px;left:375.02px;transform:scaleX(0.9955);-webkit-text-stroke:.15px #1d1d1d;">Dept 410 Financials</span><span class="t" style="font-size:10.5px;color:#1d1d1d;top:342.00px;left:520.02px;transform:scaleX(1.1000);-webkit-text-stroke:.15px #1d1d1d;">Word</span><span class="t" style="font-size:10.5px;color:#1d1d1d;top:342.00px;left:579.02px;transform:scaleX(1.0319);-webkit-text-stroke:.15px #1d1d1d;">None (No Conversion)</span><span class="t" style="font-size:10.5px;color:#1d1d1d;top:342.00px;left:692.42px;transform:scaleX(1.0084);-webkit-text-stroke:.15px #1d1d1d;">Profit &amp; Loss!N13:410</span><span class="t" style="font-size:10.5px;color:#1d1d1d;top:342.00px;left:927.42px;transform:scaleX(1.0179);-webkit-text-stroke:.15px #1d1d1d;">Profit &amp; Loss</span><span class="t" style="font-size:10.5px;color:#1d1d1d;top:342.00px;left:1169.92px;transform:scaleX(1.0157);-webkit-text-stroke:.15px #1d1d1d;">NO</span><span class="t" style="font-size:10.5px;color:#1d1d1d;top:342.00px;left:1231.52px;transform:scaleX(1.0094);-webkit-text-stroke:.15px #1d1d1d;">NO</span><span class="t" style="font-size:10.5px;color:#1d1d1d;top:342.00px;left:1282.42px;transform:scaleX(1.0157);-webkit-text-stroke:.15px #1d1d1d;">NO</span><span class="t" style="font-size:10.5px;color:#1d1d1d;top:342.00px;left:1332.12px;transform:scaleX(1.0221);-webkit-text-stroke:.15px #1d1d1d;">NO</span><svg class="b" style="left:1487.6px;top:174.4px;" width="8" height="7" viewBox="0 0 8 7"><path d="M4 .6L7.6 6H.4Z" fill="#6d6d6d"/></svg><div class="b" style="left:1488px;top:183.8px;width:7px;height:589.4px;background:#6e6e6e;border-radius:3.5px;"></div><svg class="b" style="left:1487.8px;top:793.4px;" width="8" height="6" viewBox="0 0 8 6"><path d="M.4 .4H7.6L4 5.6Z" fill="#6d6d6d"/></svg>
<!-- p_sheets -->
<div class="b" style="left:0px;top:800.8px;width:1500px;height:25.4px;background:#f0f0f0;"></div><svg class="b" style="left:21.6px;top:808px;" width="6" height="10" viewBox="0 0 6 10"><path d="M5 .8L1 4.8L5 8.8" fill="none" stroke="#3a3a3a" stroke-width="1.25"/></svg><svg class="b" style="left:46.6px;top:808px;" width="6" height="10" viewBox="0 0 6 10"><path d="M1 .8L5 4.8L1 8.8" fill="none" stroke="#3a3a3a" stroke-width="1.25"/></svg><div class="b" style="left:70.2px;top:811.8px;width:2px;height:2px;background:#333;border-radius:50%;"></div><div class="b" style="left:73px;top:811.8px;width:2px;height:2px;background:#333;border-radius:50%;"></div><div class="b" style="left:75.8px;top:811.8px;width:2px;height:2px;background:#333;border-radius:50%;"></div><div class="b" style="left:84px;top:800.8px;width:125px;height:7px;background:#fff;"></div><div class="b" style="left:80px;top:800.8px;width:10.4px;height:8px;background:#f0f0f0;border-radius:0 4px 0 0;"></div><div class="b" style="left:202.8px;top:800.8px;width:10px;height:8px;background:#f0f0f0;border-radius:4px 0 0 0;"></div><div class="b" style="left:84px;top:800.8px;width:125px;height:25px;overflow:hidden;"><div class="b" style="left:6.2px;top:-3px;width:112.6px;height:24.8px;background:#fff;border-radius:0 0 5px 5px;box-shadow:0 .5px 1.5px rgba(0,0,0,.2);"></div></div><span class="t" style="font-size:10.6px;color:#1c1c1c;top:807.00px;left:95.92px;transform:scaleX(1.1156);-webkit-text-stroke:.3px #1c1c1c;">Distribution Control</span><div class="b" style="left:96.5px;top:818.4px;width:99.6px;height:1.6px;background:#107c41;border-radius:1px;"></div><span class="t" style="font-size:10.6px;color:#444;top:809.00px;left:215.42px;transform:scaleX(1.0374);-webkit-text-stroke:.15px #444;">Profit &amp; Loss</span><span class="t" style="font-size:10.6px;color:#444;top:809.00px;left:296.72px;transform:scaleX(0.9949);-webkit-text-stroke:.15px #444;">Forecast</span><span class="t" style="font-size:10.6px;color:#444;top:809.00px;left:357.82px;transform:scaleX(1.0314);-webkit-text-stroke:.15px #444;">Rolling 12</span><span class="t" style="font-size:10.6px;color:#444;top:809.00px;left:426.42px;transform:scaleX(0.9867);-webkit-text-stroke:.15px #444;">Balance Sheet</span><span class="t" style="font-size:10.6px;color:#444;top:809.00px;left:515.42px;transform:scaleX(1.0502);-webkit-text-stroke:.15px #444;">Dept Consolidation</span><span class="t" style="font-size:10.6px;color:#444;top:809.00px;left:630.92px;transform:scaleX(0.9858);-webkit-text-stroke:.15px #444;">GXEJournalDetail</span><div class="b" style="left:205.4px;top:806.6px;width:1px;height:13.6px;background:#d9d9d9;"></div><div class="b" style="left:287px;top:806.6px;width:1px;height:13.6px;background:#d9d9d9;"></div><div class="b" style="left:347.9px;top:806.6px;width:1px;height:13.6px;background:#d9d9d9;"></div><div class="b" style="left:416.1px;top:806.6px;width:1px;height:13.6px;background:#d9d9d9;"></div><div class="b" style="left:504.1px;top:806.6px;width:1px;height:13.6px;background:#d9d9d9;"></div><div class="b" style="left:619.5px;top:806.6px;width:1px;height:13.6px;background:#d9d9d9;"></div><div class="b" style="left:724.8px;top:806.6px;width:1px;height:13.6px;background:#d9d9d9;"></div><div class="b" style="left:764.8px;top:806.6px;width:1px;height:13.6px;background:#d9d9d9;"></div><div class="b" style="left:817px;top:806.6px;width:1px;height:13.6px;background:#d9d9d9;"></div><div class="b" style="left:894.5px;top:806.6px;width:1px;height:13.6px;background:#d9d9d9;"></div><div class="b" style="left:982.5px;top:806.6px;width:1px;height:13.6px;background:#d9d9d9;"></div><div class="b" style="left:1086.5px;top:806.6px;width:1px;height:13.6px;background:#d9d9d9;"></div><div class="b" style="left:1172.1px;top:806.6px;width:1px;height:13.6px;background:#d9d9d9;"></div><div class="b" style="left:1265.7px;top:806.6px;width:1px;height:13.6px;background:#d9d9d9;"></div><div class="b" style="left:728.8px;top:803.9px;width:33.1px;height:18.2px;background:#7f7f7f;border-radius:3px;"></div><span class="t" style="font-size:10.6px;color:#fff;top:809.00px;left:734.62px;transform:scaleX(0.9389);-webkit-text-stroke:.25px #fff;">KPIs</span><div class="b" style="left:769.3px;top:803.9px;width:44.6px;height:18.2px;background:#7f7f7f;border-radius:3px;"></div><span class="t" style="font-size:10.6px;color:#fff;top:809.00px;left:774.12px;transform:scaleX(0.9979);-webkit-text-stroke:.25px #fff;">Sheet1</span><div class="b" style="left:820.8px;top:803.9px;width:70.7px;height:18.2px;background:#7f7f7f;border-radius:3px;"></div><span class="t" style="font-size:10.6px;color:#fff;top:809.00px;left:827.42px;transform:scaleX(0.9966);-webkit-text-stroke:.25px #fff;">Rolling KPIs</span><div class="b" style="left:899.2px;top:803.9px;width:80px;height:18.2px;background:#7f7f7f;border-radius:3px;"></div><span class="t" style="font-size:10.6px;color:#fff;top:809.00px;left:905.32px;transform:scaleX(0.9824);-webkit-text-stroke:.25px #fff;">Sales Analysis</span><div class="b" style="left:986.7px;top:803.9px;width:96.5px;height:18.2px;background:#7f7f7f;border-radius:3px;"></div><span class="t" style="font-size:10.6px;color:#fff;top:809.00px;left:993.32px;transform:scaleX(1.0290);-webkit-text-stroke:.25px #fff;">Customer Orders</span><div class="b" style="left:1090.7px;top:803.9px;width:78.6px;height:18.2px;background:#7f7f7f;border-radius:3px;"></div><span class="t" style="font-size:10.6px;color:#fff;top:809.00px;left:1096.02px;transform:scaleX(1.0552);-webkit-text-stroke:.25px #fff;">Top10Deficits</span><div class="b" style="left:1176.5px;top:803.9px;width:86.2px;height:18.2px;background:#4a80c0;border-radius:3px;"></div><span class="t" style="font-size:10.6px;color:#fff;top:809.00px;left:1182.92px;transform:scaleX(0.9763);-webkit-text-stroke:.25px #fff;">Free Cash Flow</span><div class="b" style="left:1270.1px;top:803.9px;width:25.9px;height:18.2px;overflow:hidden;"><div class="b" style="left:0;top:0;width:60px;height:18.2px;background:#4a80c0;border-radius:3px;"></div><span class="t" style="font-size:10.6px;color:#fff;top:5.00px;left:6.12px;transform:scaleX(1.0104);-webkit-text-stroke:.25px #fff;">Current Ratios</span></div><div class="b" style="left:1303.8px;top:811.8px;width:2px;height:2px;background:#333;border-radius:50%;"></div><div class="b" style="left:1306.7px;top:811.8px;width:2px;height:2px;background:#333;border-radius:50%;"></div><div class="b" style="left:1309.6px;top:811.8px;width:2px;height:2px;background:#333;border-radius:50%;"></div><svg class="b" style="left:1328.6px;top:808.4px;" width="9" height="9" viewBox="0 0 9 9"><path d="M4.4 .4V8.4M.4 4.4H8.4" fill="none" stroke="#333" stroke-width="1"/></svg><div class="b" style="left:1357.2px;top:808.9px;width:1.4px;height:1.4px;background:#333;border-radius:50%;"></div><div class="b" style="left:1357.2px;top:812.1px;width:1.4px;height:1.4px;background:#333;border-radius:50%;"></div><div class="b" style="left:1357.2px;top:815.3px;width:1.4px;height:1.4px;background:#333;border-radius:50%;"></div><div class="b" style="left:1370.7px;top:806.6px;width:113.4px;height:13px;background:#f6f6f6;border-radius:6.5px;"></div><svg class="b" style="left:1374.6px;top:809.4px;" width="6" height="7" viewBox="0 0 6 7"><path d="M5.4 .4V6.6L.6 3.5Z" fill="#6d6d6d"/></svg><div class="b" style="left:1384px;top:809.2px;width:46.8px;height:6.9px;background:#6e6e6e;border-radius:3.5px;"></div><svg class="b" style="left:1475.6px;top:809.4px;" width="6" height="7" viewBox="0 0 6 7"><path d="M.6 .4V6.6L5.4 3.5Z" fill="#6d6d6d"/></svg>
<!-- p_status -->
<div class="b" style="left:0px;top:826.2px;width:1500px;height:17.8px;background:#f3f3f3;border-top:1px solid #dcdcdc;"></div><span class="t" style="font-size:9.6px;color:#444;top:830.00px;left:8.77px;transform:scaleX(0.8982);-webkit-text-stroke:.15px #444;">Ready</span><div class="b" style="left:1265.3px;top:827.2px;width:30.8px;height:16.8px;background:#dedede;"></div><svg class="b" style="left:1275.2px;top:829.3px;" width="11" height="10" viewBox="0 0 11 10"><rect x=".5" y=".5" width="9.8" height="9" fill="none" stroke="#444"/><path d="M3.8 .5V9.5M7 .5V9.5M.5 3.5H10.3M.5 6.5H10.3" stroke="#444" stroke-width=".9" fill="none"/></svg><svg class="b" style="left:1306.7px;top:829.3px;" width="12" height="10" viewBox="0 0 12 10"><rect x=".5" y=".5" width="10.2" height="9" rx="1" fill="none" stroke="#444"/><rect x="3.4" y="2.6" width="4.4" height="4.8" fill="none" stroke="#444" stroke-width=".9"/></svg><svg class="b" style="left:1337.9px;top:829.3px;" width="12" height="10" viewBox="0 0 12 10"><rect x=".5" y=".5" width="10" height="9" fill="none" stroke="#444"/><path d="M3.6 .5V5.4H7.2V.5" fill="none" stroke="#444" stroke-width=".9"/></svg><div class="b" style="left:1363.5px;top:833.7px;width:5.8px;height:1px;background:#444;"></div><div class="b" style="left:1374.1px;top:833.8px;width:77.4px;height:1px;background:#7a7a7a;"></div><div class="b" style="left:1412px;top:829.3px;width:2.6px;height:10px;background:#444;"></div><svg class="b" style="left:1455.4px;top:830.8px;" width="7" height="7" viewBox="0 0 7 7"><path d="M3.3 .2V6.4M.2 3.3H6.4" stroke="#444" stroke-width="1" fill="none"/></svg><span class="t" style="font-size:9.4px;color:#444;top:829.00px;left:1472.28px;transform:scaleX(0.8628);-webkit-text-stroke:.15px #444;">100%</span>
<!-- p_menu -->
<div class="b" style="left:978.8px;top:123.2px;width:139px;height:90.4px;background:#fff;border:1px solid #a2a2a2;border-radius:4.5px;box-shadow:0 3px 7px rgba(0,0,0,.2);"></div><div class="b" style="left:979.8px;top:124.2px;width:137px;height:22px;background:#f3f3f3;border-radius:3.5px 3.5px 0 0;"></div><span class="t" style="font-size:10.2px;color:#3a3a3a;top:132.00px;left:1008.64px;transform:scaleX(0.9531);-webkit-text-stroke:.15px #3a3a3a;">Distribute All</span><span class="t" style="font-size:10.2px;color:#3a3a3a;top:153.00px;left:1008.64px;transform:scaleX(0.9001);-webkit-text-stroke:.15px #3a3a3a;">Distribute Selected</span><span class="t" style="font-size:10.2px;color:#3a3a3a;top:175.00px;left:1008.64px;transform:scaleX(0.8928);-webkit-text-stroke:.15px #3a3a3a;">Clone Sheet</span><span class="t" style="font-size:10.2px;color:#3a3a3a;top:197.00px;left:1008.64px;transform:scaleX(0.8725);-webkit-text-stroke:.15px #3a3a3a;">Clone Sheet as Values</span><svg class="b" style="left:0px;top:0px;pointer-events:none;" width="1500" height="844" viewBox="0 0 1500 844"><path d="M993.4 139.6 H992.6A1.4 1.4 0 0 1 991.2 138.2 V130.8 A1.4 1.4 0 0 1 992.6 129.4 H998.8A1.4 1.4 0 0 1 1000.2 130.8 V132.8" fill="none" stroke="#666" stroke-width=".95"/><path d="M993.4 132 H998M993.4 134.4 H996" fill="none" stroke="#666" stroke-width=".85"/><path d="M996.4 139.6 V137.4 A1 1 0 0 1 997.4 136.4 H1001M999.6 134.8 L1001.6 136.4 L999.6 138" fill="none" stroke="#2488d8" stroke-width="1.05"/><path d="M993.4 161.6 H992.6A1.4 1.4 0 0 1 991.2 160.2 V152.8 A1.4 1.4 0 0 1 992.6 151.4 H998.8A1.4 1.4 0 0 1 1000.2 152.8 V154.8" fill="none" stroke="#666" stroke-width=".95"/><path d="M993.4 154 H998M993.4 156.4 H996" fill="none" stroke="#666" stroke-width=".85"/><path d="M996.4 161.6 V159.4 A1 1 0 0 1 997.4 158.4 H1001M999.6 156.8 L1001.6 158.4 L999.6 160" fill="none" stroke="#2488d8" stroke-width="1.05"/><rect x="990.2" y="174" width="7" height="9.8" rx="1.2" fill="none" stroke="#3aa655" stroke-width=".95"/><path d="M992.8 177.3 L995.2 178.9 L992.8 180.5 Z" fill="#3aa655" stroke="#3aa655" stroke-width=".5"/><path d="M997.8 173.4 H999.6 A1.4 1.4 0 0 1 1001 174.8 V181.4 A1.4 1.4 0 0 1 999.6 182.8 H998.6" fill="none" stroke="#666" stroke-width=".9"/><rect x="990.2" y="196" width="7" height="9.8" rx="1.2" fill="none" stroke="#3aa655" stroke-width=".95"/><path d="M992.8 199.3 L995.2 200.9 L992.8 202.5 Z" fill="#3aa655" stroke="#3aa655" stroke-width=".5"/><path d="M997.8 195.4 H999.6 A1.4 1.4 0 0 1 1001 196.8 V203.4 A1.4 1.4 0 0 1 999.6 204.8 H998.6" fill="none" stroke="#666" stroke-width=".9"/></svg>
</div></body></html>
